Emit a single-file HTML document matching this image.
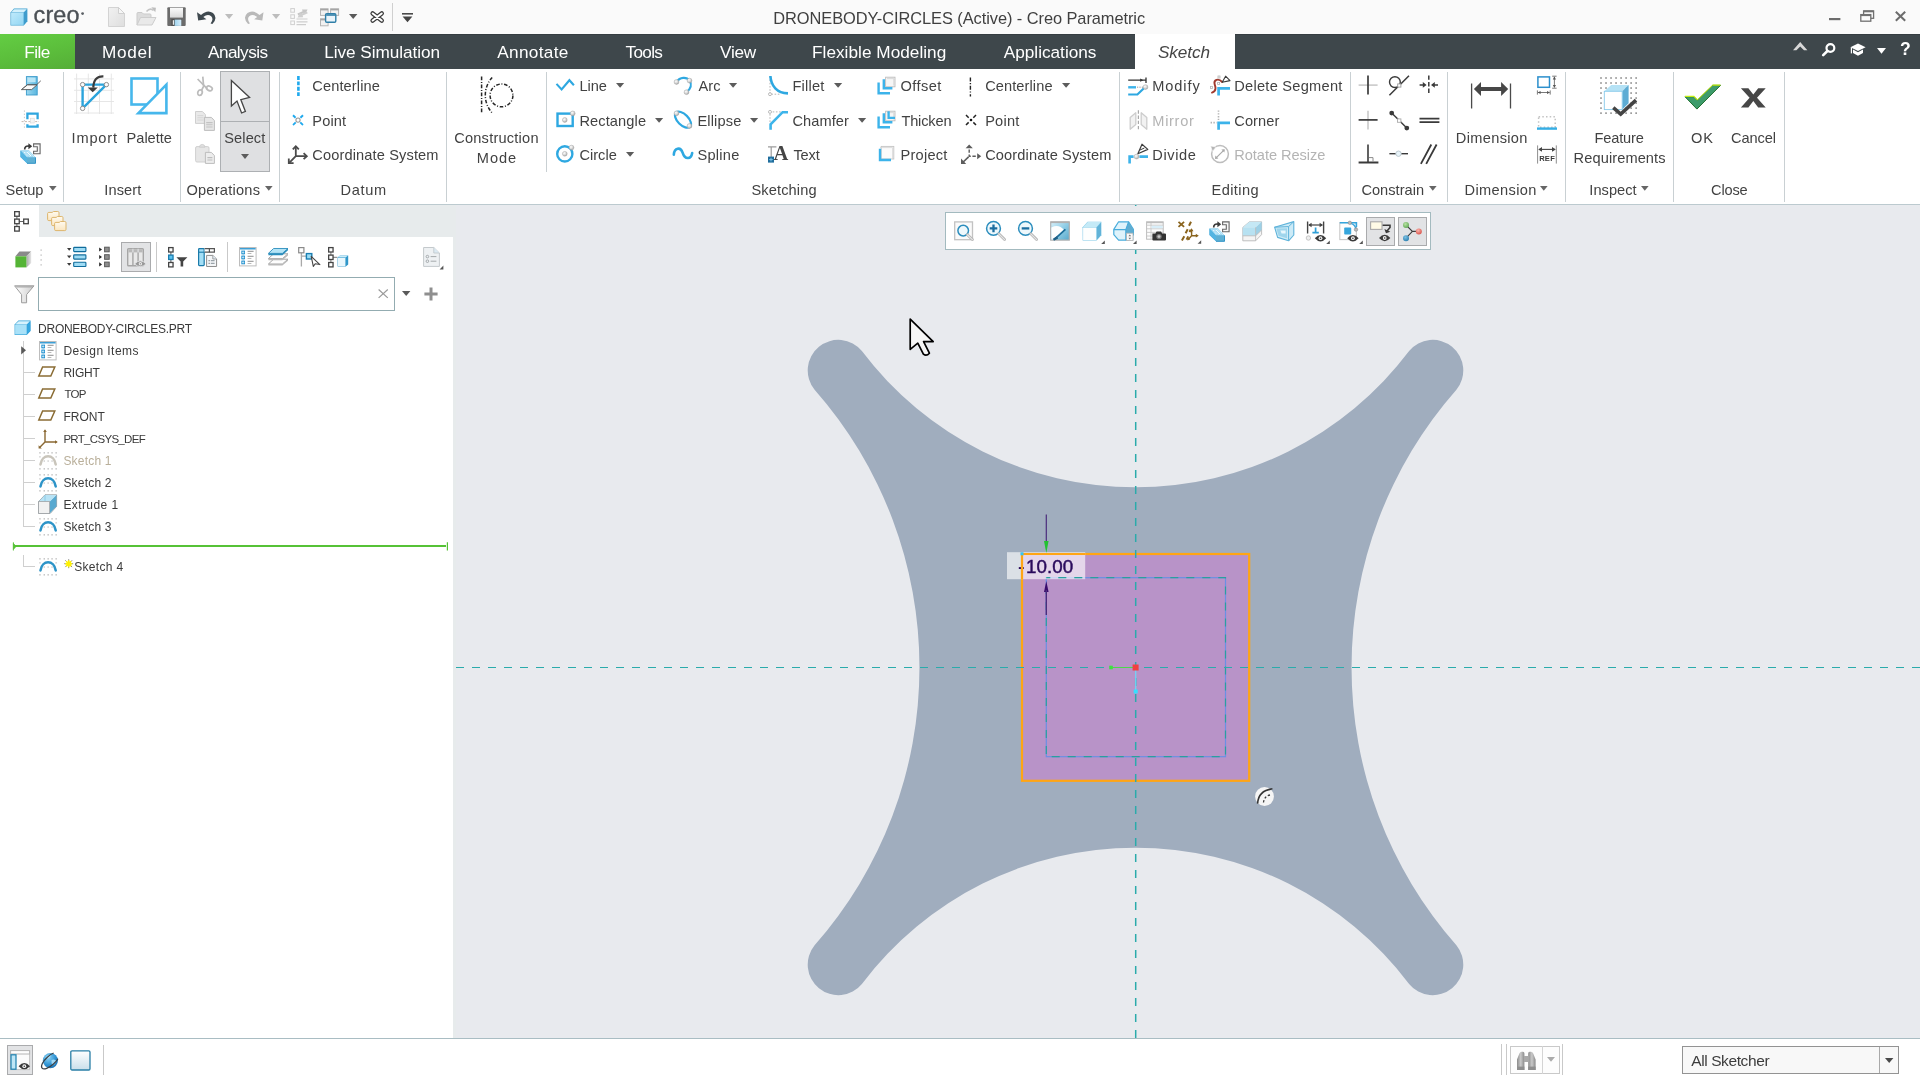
<!DOCTYPE html><html><head><meta charset="utf-8"><title>DRONEBODY-CIRCLES (Active) - Creo Parametric</title><style>
*{box-sizing:border-box}
html,body{margin:0;padding:0}
body{width:1920px;height:1080px;overflow:hidden;position:relative;background:#e8eaee;font-family:"Liberation Sans",sans-serif}
.a{position:absolute}
.t{position:absolute;white-space:pre;line-height:1}
#tx{position:absolute;left:0;top:0;width:1920px;height:1080px;will-change:transform}
svg{position:absolute;overflow:visible}
.sep{position:absolute;width:1px;background:#c9d0d3}
</style></head><body>
<div class="a" style="left:0px;top:0px;width:1920px;height:34px;background:#fafafa;"></div>
<div class="a" style="left:0px;top:34px;width:1920px;height:35px;background:#3e474b;"></div>
<div class="a" style="left:0px;top:34px;width:1920px;height:1px;background:#353d41;"></div>
<div class="a" style="left:0px;top:34px;width:75px;height:35px;background:linear-gradient(168deg,#63cd43 0%,#5cbf3c 50%,#55ae37 100%);"></div>
<div class="a" style="left:1135px;top:34px;width:100px;height:36px;background:#ffffff;"></div>
<div class="a" style="left:0px;top:69px;width:1920px;height:135px;background:#ffffff;"></div>
<div class="a" style="left:1135px;top:69px;width:100px;height:2px;background:#ffffff;"></div>
<div class="a" style="left:0px;top:204px;width:1920px;height:1px;background:#bccacf;"></div>
<div class="a" style="left:0px;top:205px;width:39px;height:33px;background:#ffffff;"></div>
<div class="a" style="left:39px;top:205px;width:414px;height:32px;background:#e7ebec;"></div>
<div class="a" style="left:0px;top:237px;width:453px;height:802px;background:#ffffff;"></div>
<div class="a" style="left:453px;top:205px;width:3px;height:833px;background:#e7ebec;"></div>
<div class="a" style="left:0px;top:1038px;width:1920px;height:1px;background:#a9bdc3;"></div>
<div class="a" style="left:0px;top:1039px;width:1920px;height:41px;background:#ffffff;"></div>
<div class="sep" style="left:63px;top:72px;height:130px"></div>
<div class="sep" style="left:180px;top:72px;height:130px"></div>
<div class="sep" style="left:279px;top:72px;height:130px"></div>
<div class="sep" style="left:446px;top:72px;height:130px"></div>
<div class="sep" style="left:1119px;top:72px;height:130px"></div>
<div class="sep" style="left:1350px;top:72px;height:130px"></div>
<div class="sep" style="left:1447px;top:72px;height:130px"></div>
<div class="sep" style="left:1565px;top:72px;height:130px"></div>
<div class="sep" style="left:1673px;top:72px;height:130px"></div>
<div class="sep" style="left:1784px;top:72px;height:130px"></div>
<div class="sep" style="left:546px;top:72px;height:100px"></div>
<div class="sep" style="left:392px;top:3px;height:28px;background:#d0d0d0"></div>
<svg width="1920" height="1080" style="left:0;top:0" viewBox="0 0 1920 1080">
<path d="M861.9 351.1 A342.8 342.8 0 0 0 1409.1 351.1 A30.5 30.5 0 1 1 1456.4 389.7 A420.4 420.4 0 0 0 1456.4 945.3 A30.5 30.5 0 1 1 1409.1 983.9 A342.8 342.8 0 0 0 861.9 983.9 A30.5 30.5 0 1 1 814.6 945.3 A420.4 420.4 0 0 0 814.6 389.7 A30.5 30.5 0 1 1 861.9 351.1Z" fill="#a0adbe"/>
<rect x="1022" y="554" width="227.2" height="226.8" fill="#b893c8" stroke="#ffa514" stroke-width="2.2"/>
<rect x="1046.3" y="577.7" width="179.2" height="179" fill="none" stroke="#6b8fe4" stroke-width="1.2"/>
<rect x="1046.3" y="577.7" width="179.2" height="179" fill="none" stroke="#2a9f9f" stroke-width="1.2" stroke-dasharray="8 8" stroke-dashoffset="4"/>
<line x1="1135.7" y1="205" x2="1135.7" y2="1038" stroke="#2aabab" stroke-width="1.5" stroke-dasharray="8 8" stroke-dashoffset="7"/>
<line x1="453" y1="667.5" x2="1920" y2="667.5" stroke="#2aabab" stroke-width="1.2" stroke-dasharray="8 8" stroke-dashoffset="13"/>
<rect x="1007" y="552.2" width="78.2" height="27" fill="#ffffff" fill-opacity="0.62"/>
<rect x="1018.8" y="567.1" width="5" height="1.9" fill="#2a0a5c"/>
<path d="M1022 579.2V554H1085.2" fill="none" stroke="#ffa514" stroke-width="2.2"/>
<rect x="1020.5" y="552.3" width="3" height="3" fill="#35c4f2"/>
<path d="M1046.3 577.7H1085.2" fill="none" stroke="#2a9f9f" stroke-width="1.2" stroke-dasharray="8 8" stroke-dashoffset="4"/>
<line x1="1046.3" y1="514.5" x2="1046.3" y2="542" stroke="#4b2c7c" stroke-width="1.2"/>
<path d="M1044 541H1048.6L1046.3 553Z" fill="#22c232"/>
<path d="M1046.3 581L1048.6 592H1044Z" fill="#3a0c6c"/>
<line x1="1046.3" y1="590" x2="1046.3" y2="615" stroke="#4b2c7c" stroke-width="1.4"/>
<line x1="1111" y1="667.5" x2="1133" y2="667.5" stroke="#4cd84c" stroke-width="1"/>
<rect x="1109.2" y="665.7" width="3.6" height="3.6" fill="#3fe03f"/>
<line x1="1135.7" y1="668" x2="1135.7" y2="691" stroke="#6fd8f8" stroke-width="1.2"/>
<rect x="1133.7" y="689.5" width="4" height="4" fill="#35e0ff"/>
<rect x="1132.6" y="664.5" width="6" height="6" fill="#f04040"/>
<circle cx="1264.5" cy="796.5" r="9.4" fill="#f5f5f5"/>
<path d="M1257.6 803.6C1258 795 1263 790 1272.4 788.8" fill="none" stroke="#333" stroke-width="1.6"/>
<path d="M1263.5 802.5C1264 798 1266.5 795.5 1271 794.8" fill="none" stroke="#3a3a3a" stroke-width="1.3" stroke-dasharray="2.2 2"/>
<path d="M910.2 319.2V349.3L917.8 343.2L923.4 354.2Q926.5 356.6 929.4 353.2L923.6 341.6H933.2Z" fill="#f6f6f6" stroke="#000" stroke-width="1.7" stroke-linejoin="round"/>
</svg>
<svg style="left:10px;top:8px" width="18" height="18" viewBox="0 0 18 18">
<defs><linearGradient id="cc1" x1="0" y1="0" x2="1" y2="1"><stop offset="0" stop-color="#bfeafb"/><stop offset="1" stop-color="#93d6f3"/></linearGradient></defs>
<path d="M0.5 4.5L4 0.6H17.4V13.2L13.8 17.4H0.5Z" fill="#3d9fd0"/>
<path d="M1 4.6L4.2 1.2H16.9L13.6 4.6Z" fill="#d4f1fc"/>
<path d="M13.9 4.8L17 1.6V13L13.9 16.6Z" fill="#3f9ccc"/>
<rect x="1.1" y="4.9" width="12.5" height="12" fill="url(#cc1)"/></svg>
<svg style="left:80.6px;top:12.4px" width="3.2" height="3.2" viewBox="0 0 3.2 3.2"><circle cx="1.6" cy="1.6" r="1.4" fill="#5a5f64"/></svg>
<svg style="left:108px;top:7px" width="17" height="20" viewBox="0 0 17 20">
<defs><linearGradient id="nd" x1="0" y1="0" x2="1" y2="1"><stop offset="0" stop-color="#f1f1f1"/><stop offset="1" stop-color="#dedede"/></linearGradient></defs>
<path d="M0.5 0.5H10.5L16.5 6.5V19.5H0.5Z" fill="url(#nd)" stroke="#d3d3d3"/>
<path d="M10.5 0.5V6.5H16.5Z" fill="#f6f6f6" stroke="#d0d0d0" stroke-linejoin="round"/></svg>
<svg style="left:135.5px;top:7px" width="21" height="19" viewBox="0 0 21 19">
<path d="M1 18V6.5Q1 5.5 2 5.5H6L7.5 7H14Q15 7 15 8V10.5" fill="#dcdcdc" stroke="#cbcbcb"/>
<path d="M1 18L4.5 10.5H20L16 18Z" fill="#e9e9e9" stroke="#cdcdcd" stroke-linejoin="round"/>
<path d="M10.5 4.5Q14 0.5 17.5 3.5" fill="none" stroke="#c4c4c4" stroke-width="1.6"/>
<path d="M15 0.4H19.6V5L15 0.4Z" fill="#bdbdbd" transform="rotate(8 17 3)"/></svg>
<svg style="left:167px;top:7.4px" width="19" height="19.2" viewBox="0 0 19 19.2">
<defs><linearGradient id="sv1" x1="0" y1="0" x2="0" y2="1"><stop offset="0" stop-color="#fbfbfb"/><stop offset="1" stop-color="#d9d9d9"/></linearGradient>
<linearGradient id="sv2" x1="0" y1="0" x2="1" y2="0"><stop offset="0" stop-color="#9fd3ee"/><stop offset="1" stop-color="#d7eefb"/></linearGradient></defs>
<rect x="0.3" y="0.3" width="18.4" height="18.6" rx="1" fill="#6b6b6b"/>
<rect x="3" y="0.8" width="13" height="9.8" fill="url(#sv1)"/>
<rect x="4.4" y="12" width="10.6" height="6.9" fill="#4f4f4f"/>
<rect x="7.6" y="12.6" width="6.8" height="6.3" fill="url(#sv2)"/>
<rect x="5.8" y="13.2" width="1.2" height="4.6" fill="#e8e8e8"/></svg>
<svg style="left:197px;top:11.2px" width="19.5" height="13.4" viewBox="0 0 19.5 13.4"><path d="M0 1.2L1.2 9.6L9.4 8.2L6.3 6.1Q10.5 2.6 14.2 5.2Q17 8 13.6 12.4L15.4 13Q21.4 6.8 16 2Q10.4 -2 4 4.1Z" fill="#3f494f"/></svg>
<svg style="left:224.70000000000002px;top:14.100000000000001px" width="8.2" height="5" viewBox="0 0 8.2 5"><path d="M0 0H8.2L4.1 5Z" fill="#bdbdbd"/></svg>
<svg style="left:243.6px;top:11.2px" width="19.5" height="13.4" viewBox="0 0 19.5 13.4"><g transform="translate(19.5,0) scale(-1,1)"><path d="M0 1.2L1.2 9.6L9.4 8.2L6.3 6.1Q10.5 2.6 14.2 5.2Q17 8 13.6 12.4L15.4 13Q21.4 6.8 16 2Q10.4 -2 4 4.1Z" fill="#b9b9b9"/></g></svg>
<svg style="left:271.9px;top:14.100000000000001px" width="8.2" height="5" viewBox="0 0 8.2 5"><path d="M0 0H8.2L4.1 5Z" fill="#bdbdbd"/></svg>
<svg style="left:290px;top:7.2px" width="19" height="19" viewBox="0 0 19 19">
<g fill="none" stroke="#cfcfcf" stroke-width="1"><rect x="0.8" y="1.6" width="3.6" height="3.6"/><rect x="0.8" y="7.8" width="3.6" height="3.6"/><rect x="0.8" y="14" width="3.6" height="3.6"/></g>
<g stroke="#cdcdcd" stroke-width="1.2"><path d="M6.5 12H17.5M6.5 14.8H17.5M6.5 17.6H16"/></g>
<path d="M7.4 6.6L12.6 4.2L12 2.6L17.6 2.4L15 7.4L14 5.8L8.4 8.4Z" fill="#c6c6c6"/>
<path d="M17.8 6.2L12.6 8.6L13.2 10.2L7.6 10.4L10.2 5.4L11.2 7L16.8 4.4Z" fill="#cfcfcf"/></svg>
<svg style="left:320px;top:8.2px" width="19.4" height="18.6" viewBox="0 0 19.4 18.6">
<g fill="#f1f1f1" stroke="#b5b5b5" stroke-width="1"><rect x="0.5" y="0.8" width="7.6" height="6.6"/><rect x="10.6" y="0.8" width="8" height="6.6"/><rect x="0.5" y="10.8" width="7.6" height="7"/></g>
<g fill="#a5a5a5"><rect x="0.5" y="0.8" width="7.6" height="1.6"/><rect x="10.6" y="0.8" width="8" height="1.6"/><rect x="0.5" y="10.8" width="7.6" height="1.6"/></g>
<rect x="5.6" y="5.6" width="10.2" height="8.6" rx="1.2" fill="#eaf4fa" stroke="#2f7fa8" stroke-width="1.4"/>
<rect x="6.2" y="6.2" width="9" height="1.6" fill="#2f7fa8"/></svg>
<svg style="left:348.7px;top:14.100000000000001px" width="8.4" height="5" viewBox="0 0 8.4 5"><path d="M0 0H8.4L4.2 5Z" fill="#595959"/></svg>
<svg style="left:370.3px;top:11.4px" width="14.4" height="12" viewBox="0 0 14.4 12">
<path d="M2.7 2.5L11.7 9.5M11.7 2.5L2.7 9.5" stroke="#3c3c3c" stroke-width="4.6" stroke-linecap="round"/>
<path d="M2.7 2.5L11.7 9.5M11.7 2.5L2.7 9.5" stroke="#ffffff" stroke-width="2.1" stroke-linecap="round"/></svg>
<svg style="left:402px;top:13px" width="11" height="9.4" viewBox="0 0 11 9.4"><rect x="0" y="0" width="11" height="1.6" fill="#4a4a4a"/><path d="M0.6 3.4H10.4L5.5 9.2Z" fill="#444"/></svg>
<svg style="left:1829px;top:17.8px" width="11.4" height="2.4" viewBox="0 0 11.4 2.4"><rect width="11.4" height="2.2" fill="#6c6c6c"/></svg>
<svg style="left:1860px;top:10px" width="14.6" height="12" viewBox="0 0 14.6 12">
<rect x="3.6" y="0.9" width="10" height="7.4" fill="none" stroke="#707070" stroke-width="1.3"/><rect x="3.6" y="0.5" width="10" height="1.8" fill="#707070"/>
<rect x="0.8" y="4.6" width="10" height="6.6" fill="#fafafa" stroke="#707070" stroke-width="1.3"/><rect x="0.8" y="4.2" width="10" height="1.9" fill="#707070"/></svg>
<svg style="left:1895px;top:10.8px" width="11" height="10.6" viewBox="0 0 11 10.6"><path d="M0.8 0.8L10.2 9.8M10.2 0.8L0.8 9.8" stroke="#6c6c6c" stroke-width="2"/></svg>
<svg style="left:1793px;top:42px" width="14.4" height="8.2" viewBox="0 0 14.4 8.2"><path d="M0 8.2L7.2 0L14.4 8.2H11L7.2 4.4L3.4 8.2Z" fill="#d8d8d8"/></svg>
<svg style="left:1821.5px;top:43px" width="13.5" height="13.5" viewBox="0 0 13.5 13.5"><circle cx="8.4" cy="5" r="3.9" fill="none" stroke="#fff" stroke-width="2.2"/><path d="M5.4 8L1.2 12.2" stroke="#fff" stroke-width="2.6" stroke-linecap="round"/></svg>
<svg style="left:1850px;top:43.4px" width="16" height="13.6" viewBox="0 0 16 13.6">
<path d="M8 0.4L15.6 4.2L8 8L0.4 4.2Z" fill="#fff"/>
<path d="M3 6.4V10L8 12.8L13 10V6.4L8 9.2Z" fill="#fff"/>
<path d="M1.4 4.6V10.4" stroke="#fff" stroke-width="1.2"/></svg>
<svg style="left:1876.6px;top:47.6px" width="9" height="5.8" viewBox="0 0 9 5.8"><path d="M0 0H9L4.5 5.8Z" fill="#fff"/></svg>
<span class="t" style="left:1900.2px;top:41.4px;font-size:17.6px;font-weight:bold;color:#fff;will-change:transform">?</span>
<svg style="left:21px;top:75.6px" width="20.4" height="19.6" viewBox="0 0 20.4 19.6">
<defs><linearGradient id="s1" x1="0" y1="0" x2="1" y2="0"><stop offset="0" stop-color="#9bd8f1"/><stop offset="1" stop-color="#5bb6de"/></linearGradient></defs>
<rect x="5.4" y="0.6" width="10.8" height="18.4" fill="url(#s1)" stroke="#3c9bcb" stroke-width="0.9"/>
<rect x="6.6" y="1.6" width="8" height="4.6" fill="#b9e6f7"/>
<path d="M0.4 13.6L6.4 8.8H15.6L19.8 4.8" fill="none" stroke="#555" stroke-width="0.9"/>
<path d="M0.6 13.6L6.4 8.9H16L10.6 13.6Z" fill="#fbfbfb" stroke="#555" stroke-width="0.9" stroke-linejoin="round"/></svg>
<svg style="left:21px;top:110px" width="19" height="19" viewBox="0 0 19 19">
<path d="M3.4 0.4V18.6" stroke="#c9c9c9" stroke-width="1" stroke-dasharray="1.4 1.8"/>
<path d="M0.6 11.6H18" stroke="#c9b9b0" stroke-width="1" stroke-dasharray="2 1.4"/>
<path d="M6.4 9.2V3.6H16.6V9.2M6.4 14.2V16.6H16.6V14.2" fill="none" stroke="#2fa6df" stroke-width="2.3"/>
<rect x="9.6" y="8.2" width="3.6" height="4.8" fill="#f4f4f4" stroke="#d5d5d5" stroke-width="0.6"/></svg>
<svg style="left:20.4px;top:143.4px" width="21" height="21" viewBox="0 0 21 21"><path d="M13.6 0.9H20.1V10.8H13.6V8.2H17.3V3.7H13.6Z" fill="#f6f6f6" stroke="#666" stroke-width="1.1"/>
<path d="M4.7 6.6Q4.6 2.4 9.2 3.1" fill="none" stroke="#3a3a3a" stroke-width="1.7"/><path d="M8.4 0.2L12.2 3.3L8.4 6.2Z" fill="#3a3a3a"/>
<path d="M0.5 7.5H9L15.5 14.5V20.3H7L0.5 14Z" fill="#3aa3d8"/>
<path d="M0.5 7.5H9L15.5 14.5H7Z" fill="#c4eafa"/>
<path d="M2.6 8.6H7.8L12.6 13.6H10.4L6.8 9.8H5.2L8.8 13.6H7.2Z" fill="#f4fcff" stroke="#6cc0e6" stroke-width="0.5"/>
<path d="M0.5 7.5L7 14.5V20.3L0.5 14Z" fill="#55b5e2"/>
<rect x="7" y="14.5" width="8.5" height="5.8" fill="#5fb0d4"/><path d="M7 20.3H15.5V14.5" fill="none" stroke="#2a8fc4" stroke-width="0.9"/></svg>
<svg style="left:49.300000000000004px;top:186.2px" width="7.6" height="4.8" viewBox="0 0 7.6 4.8"><path d="M0 0H7.6L3.8 4.8Z" fill="#666"/></svg>
<svg style="left:74px;top:70px" width="40" height="46" viewBox="0 0 40 46"><path d="M2.6 3.6V44" stroke="#e3e3e3" stroke-width="0.9"/><path d="M14.3 3.6V44" stroke="#e3e3e3" stroke-width="0.9"/><path d="M25.5 3.6V44" stroke="#e3e3e3" stroke-width="0.9"/><path d="M37.3 3.6V44" stroke="#e3e3e3" stroke-width="0.9"/><path d="M0 8.9H40" stroke="#e3e3e3" stroke-width="0.9"/><path d="M0 20.3H40" stroke="#e3e3e3" stroke-width="0.9"/><path d="M0 31.5H40" stroke="#e3e3e3" stroke-width="0.9"/><path d="M0 43H40" stroke="#e3e3e3" stroke-width="0.9"/>
<path d="M8.6 14.6H32.4L8.6 38.4Z" fill="none" stroke="#2ba4dc" stroke-width="2.4" stroke-linejoin="round"/>
<g fill="#fafafa" stroke="#8f8f8f" stroke-width="1"><circle cx="8.6" cy="14.6" r="2.2"/><circle cx="32.4" cy="14.6" r="2.2"/><circle cx="8.6" cy="38.4" r="2.2"/></g>
<path d="M29.4 6.4Q19.6 6 19.3 17.6" fill="none" stroke="#3b3b3b" stroke-width="2.2"/>
<path d="M13.8 17.4H23.8L18.7 22.2Z" fill="#3b3b3b"/></svg>
<svg style="left:129px;top:76px" width="40" height="40" viewBox="0 0 40 40">
<rect x="2.5" y="2.5" width="26" height="26" fill="#fff" stroke="#46b7ec" stroke-width="2.6"/>
<path d="M37.4 8.6V37.1H9.4Z" fill="#fff" stroke="#46b7ec" stroke-width="2.6" stroke-linejoin="miter"/></svg>
<svg style="left:195.6px;top:76px" width="18" height="20" viewBox="0 0 18 20">
<g fill="none" stroke="#bcbcbc" stroke-width="1.7"><path d="M1.6 3L11.4 12.8"/><path d="M6.8 0.6L7.6 10.4L5.2 15"/>
<ellipse cx="4" cy="16.6" rx="2.2" ry="2.8" transform="rotate(20 4 16.6)"/><ellipse cx="13.4" cy="12.4" rx="3" ry="2.2" transform="rotate(25 13.4 12.4)"/></g></svg>
<svg style="left:195px;top:111px" width="20" height="20" viewBox="0 0 20 20">
<path d="M0.5 0.5H7.4L10.4 3.6V12.4H0.5Z" fill="#e9e9e9" stroke="#cfcfcf"/>
<path d="M2.4 4.6H8.4M2.4 6.8H8.4M2.4 9H8.4" stroke="#d4d4d4" stroke-width="0.9"/>
<path d="M9.4 6.4H16.4L19.4 9.6V19.4H9.4Z" fill="#e6e6e6" stroke="#bdbdbd"/>
<path d="M11.2 11.6H17.6M11.2 13.8H17.6M11.2 16H17.6" stroke="#c2c2c2" stroke-width="1.1"/></svg>
<svg style="left:195px;top:144px" width="20" height="20" viewBox="0 0 20 20">
<rect x="0.6" y="2.6" width="13.4" height="15.4" rx="1.4" fill="#e6e6e6" stroke="#d0d0d0"/>
<path d="M4.4 3.2Q4.6 0.4 7.2 0.4Q9.8 0.4 10 3.2Z" fill="#e0e0e0" stroke="#cacaca" stroke-width="0.8"/>
<path d="M10.4 8.4H16.4L19.4 11.6V19.4H10.4Z" fill="#ededed" stroke="#bdbdbd"/>
<path d="M12.4 13.6H17.4M12.4 16H17.4" stroke="#bdbdbd" stroke-width="1.2"/></svg>
<div class="a" style="left:220px;top:71px;width:50px;height:101px;background:#dfe0e2;border:1px solid #adb0b3"></div>
<div class="a" style="left:221px;top:121px;width:48px;height:1px;background:#adb0b3"></div>
<svg style="left:229px;top:78px" width="24" height="38" viewBox="0 0 24 38"><path d="M2.4 2.4V28L8 23L12.6 35L16.4 33.4L11.8 21.6L20.6 19.4Z" fill="#fff" stroke="#464646" stroke-width="1.3" stroke-linejoin="miter"/></svg>
<svg style="left:241.0px;top:153.9px" width="8" height="5" viewBox="0 0 8 5"><path d="M0 0H8L4.0 5Z" fill="#5c5c5c"/></svg>
<svg style="left:265.4px;top:186.2px" width="7.6" height="4.8" viewBox="0 0 7.6 4.8"><path d="M0 0H7.6L3.8 4.8Z" fill="#666"/></svg>
<svg style="left:296.8px;top:76px" width="2.8" height="20" viewBox="0 0 2.8 20"><path d="M1.4 0V20" stroke="#1fa9ee" stroke-width="2.6" stroke-dasharray="3.9 1.5"/></svg>
<svg style="left:292px;top:114px" width="12" height="12" viewBox="0 0 12 12"><path d="M1 1.2L11 11M11 1.2L1 11" stroke="#1fa9ee" stroke-width="1.9" stroke-dasharray="3.6 6.6 3.6 0"/><circle cx="6" cy="6.1" r="2.1" fill="#fff" stroke="#9a9a9a" stroke-width="1.1"/></svg>
<svg style="left:287.6px;top:144.6px" width="20" height="19" viewBox="0 0 20 19"><g fill="none" stroke="#4b4b4b" stroke-width="1.8" stroke-linejoin="miter"><path d="M7.8 1.2V11.2H18.6M7.8 11.2L1.2 17.8"/><path d="M4.8 4.4L7.8 1.2L10.8 4.4M15.6 8.2L18.8 11.2L15.6 14.2M0.8 13.6V18.2H5.6"/></g></svg>
<svg style="left:478px;top:74px" width="40" height="42" viewBox="0 0 40 42">
<g fill="none" stroke="#262626" stroke-width="1.5" stroke-dasharray="3.6 1.7 1 1.7">
<path d="M3.6 2.6V39.8"/>
<path d="M14.2 3.4A26.4 26.4 0 0 0 14.2 39"/>
<circle cx="23.5" cy="21.4" r="11.4"/></g></svg>
<svg width="0" height="0" style="left:0;top:0"><defs><radialGradient id="ballg" cx="0.38" cy="0.35" r="0.75"><stop offset="0" stop-color="#ffffff"/><stop offset="0.55" stop-color="#d2d2d2"/><stop offset="1" stop-color="#8c8c8c"/></radialGradient><linearGradient id="blg" x1="0" y1="0" x2="0" y2="1"><stop offset="0" stop-color="#58c1ee"/><stop offset="1" stop-color="#2a9fd6"/></linearGradient></defs></svg>
<svg style="left:555px;top:78px" width="20" height="14" viewBox="0 0 20 14"><path d="M1.5 5.9L6.6 11.4L14.4 2.2L18.9 7.3" fill="none" stroke="#2ea8e1" stroke-width="2.1"/></svg>
<svg style="left:616.0px;top:83.3px" width="8.2" height="4.8" viewBox="0 0 8.2 4.8"><path d="M0 0H8.2L4.1 4.8Z" fill="#5c5c5c"/></svg>
<svg style="left:555px;top:110px" width="21" height="19" viewBox="0 0 21 19"><rect x="2.5" y="3.6" width="15.2" height="12.4" fill="none" stroke="#2ea8e1" stroke-width="2.4"/><circle cx="17.7" cy="3.4" r="2.4" fill="url(#ballg)" stroke="#a8a8a8" stroke-width="0.5"/><circle cx="9.8" cy="10" r="2.4" fill="url(#ballg)" stroke="#a8a8a8" stroke-width="0.5"/></svg>
<svg style="left:655.1px;top:117.6px" width="8.2" height="4.8" viewBox="0 0 8.2 4.8"><path d="M0 0H8.2L4.1 4.8Z" fill="#5c5c5c"/></svg>
<svg style="left:555px;top:144px" width="21" height="20" viewBox="0 0 21 20"><circle cx="9.8" cy="9.9" r="7.6" fill="none" stroke="#2ea8e1" stroke-width="2.4"/><circle cx="16.5" cy="3.6" r="2.4" fill="url(#ballg)" stroke="#a8a8a8" stroke-width="0.5"/><circle cx="9.8" cy="9.8" r="2.4" fill="url(#ballg)" stroke="#a8a8a8" stroke-width="0.5"/></svg>
<svg style="left:626.0px;top:151.79999999999998px" width="8.2" height="4.8" viewBox="0 0 8.2 4.8"><path d="M0 0H8.2L4.1 4.8Z" fill="#5c5c5c"/></svg>
<svg style="left:672px;top:76px" width="22" height="20" viewBox="0 0 22 20"><path d="M4.5 6C8 0.8 14.6 0.6 17.5 4.6C20.4 8.6 18.6 13 14.5 16.2" fill="none" stroke="#2ea8e1" stroke-width="2.2"/><circle cx="4.5" cy="6" r="2.4" fill="url(#ballg)" stroke="#a8a8a8" stroke-width="0.5"/><circle cx="17.5" cy="4.6" r="2.4" fill="url(#ballg)" stroke="#a8a8a8" stroke-width="0.5"/><circle cx="14.5" cy="16.2" r="2.4" fill="url(#ballg)" stroke="#a8a8a8" stroke-width="0.5"/></svg>
<svg style="left:729.0px;top:83.3px" width="8.2" height="4.8" viewBox="0 0 8.2 4.8"><path d="M0 0H8.2L4.1 4.8Z" fill="#5c5c5c"/></svg>
<svg style="left:672px;top:110px" width="22" height="20" viewBox="0 0 22 20"><ellipse cx="11" cy="9.7" rx="10" ry="5.4" transform="rotate(45 11 9.7)" fill="none" stroke="#2ea8e1" stroke-width="2.2"/><circle cx="4.5" cy="3.3" r="2.4" fill="url(#ballg)" stroke="#a8a8a8" stroke-width="0.5"/><circle cx="17.5" cy="16" r="2.4" fill="url(#ballg)" stroke="#a8a8a8" stroke-width="0.5"/></svg>
<svg style="left:749.9px;top:117.6px" width="8.2" height="4.8" viewBox="0 0 8.2 4.8"><path d="M0 0H8.2L4.1 4.8Z" fill="#5c5c5c"/></svg>
<svg style="left:672px;top:146px" width="22" height="16" viewBox="0 0 22 16"><path d="M1.8 8.6C2.4 2 8.4 0.4 10.6 6.6C12.8 13.6 19 14 20.2 7" fill="none" stroke="#2ea8e1" stroke-width="2.6" stroke-linecap="round"/></svg>
<svg style="left:767px;top:75px" width="22" height="21" viewBox="0 0 22 21"><path d="M3 1.4V19.2H13" fill="none" stroke="#b5b5b5" stroke-width="1" stroke-dasharray="1.6 1.6"/><circle cx="3" cy="19.2" r="1.5" fill="#fff" stroke="#aaa" stroke-width="0.8"/>
<path d="M3.4 1C4 11 10 18 21 18.4" fill="none" stroke="#2ea8e1" stroke-width="2.6"/></svg>
<svg style="left:833.8px;top:83.3px" width="8.2" height="4.8" viewBox="0 0 8.2 4.8"><path d="M0 0H8.2L4.1 4.8Z" fill="#5c5c5c"/></svg>
<svg style="left:767px;top:110px" width="22" height="21" viewBox="0 0 22 21"><path d="M3 12V1.9H14" fill="none" stroke="#b5b5b5" stroke-width="1" stroke-dasharray="1.6 1.6"/><circle cx="3" cy="1.9" r="1.5" fill="#fff" stroke="#aaa" stroke-width="0.8"/>
<path d="M21 2.2H15.6L3.6 14.4V19.8" fill="none" stroke="#3db4ea" stroke-width="2.6"/></svg>
<svg style="left:857.9px;top:117.6px" width="8.2" height="4.8" viewBox="0 0 8.2 4.8"><path d="M0 0H8.2L4.1 4.8Z" fill="#5c5c5c"/></svg>
<svg style="left:767px;top:145px;will-change:transform" width="22" height="19" viewBox="0 0 22 19"><path d="M1 1.9H9.4M4.2 1.9V12" stroke="#9c9c9c" stroke-width="1.2"/>
<text x="6.4" y="15.3" font-family="Liberation Serif,serif" font-weight="bold" font-size="20.5" fill="#454545">A</text>
<rect x="1" y="11.6" width="6" height="6" fill="#1f6d9c"/><path d="M2.2 14.6H5.8M4 12.8V16.4" stroke="#7cc4e8" stroke-width="1"/></svg>
<svg style="left:877px;top:76px" width="20" height="20" viewBox="0 0 20 20"><rect x="8.6" y="1.2" width="9.4" height="9.6" fill="#f6f6f6" stroke="#bdbdbd" stroke-width="0.9"/><path d="M10 2.6H16.8V9.6" fill="none" stroke="#d0d0d0" stroke-width="0.8"/>
<path d="M6.8 3.2V12.2H15.4" fill="none" stroke="#3cb3ea" stroke-width="2.4"/><path d="M1.6 6.4V17.2H13" fill="none" stroke="#3cb3ea" stroke-width="2.4"/></svg>
<svg style="left:877px;top:110px" width="20" height="20" viewBox="0 0 20 20"><rect x="8.6" y="1.2" width="9.4" height="9.6" fill="#f6f6f6" stroke="#bdbdbd" stroke-width="0.9"/><path d="M10 2.6H16.8V9.6" fill="none" stroke="#d0d0d0" stroke-width="0.8"/>
<path d="M6.8 3.2V12.2H15.4" fill="none" stroke="#3cb3ea" stroke-width="2.4"/><path d="M1.6 6.4V17.2H13" fill="none" stroke="#3cb3ea" stroke-width="2.4"/><path d="M11.6 1.2V7.8H18" fill="none" stroke="#3cb3ea" stroke-width="2.3"/></svg>
<svg style="left:877px;top:145px" width="20" height="18" viewBox="0 0 20 18"><rect x="4.2" y="1.4" width="12.6" height="12.6" fill="#fbfbfb" stroke="#c4c4c4" stroke-width="0.9"/><path d="M3 2.6H15.6V14" fill="none" stroke="#d4d4d4" stroke-width="0.8"/>
<path d="M3 3.8V15H14" fill="none" stroke="#3cb3ea" stroke-width="2.4"/></svg>
<svg style="left:969px;top:76.6px" width="3" height="20" viewBox="0 0 3 20"><path d="M1.4 0.4V19.6" stroke="#222" stroke-width="1.4" stroke-dasharray="4 1.6 1.2 1.6"/></svg>
<svg style="left:1062.2px;top:83.3px" width="8.2" height="4.8" viewBox="0 0 8.2 4.8"><path d="M0 0H8.2L4.1 4.8Z" fill="#5c5c5c"/></svg>
<svg style="left:964.8px;top:114px" width="12" height="12" viewBox="0 0 12 12"><path d="M1 1L11 11M11 1L1 11" stroke="#222" stroke-width="1.5" stroke-dasharray="3.8 6.6 3.8 0"/><circle cx="6" cy="6" r="1.3" fill="#111"/></svg>
<svg style="left:960px;top:143.6px" width="22" height="21" viewBox="0 0 22 21"><g fill="#5c5c5c"><path d="M5.6 4.2L9.2 0.4L12.8 4.2Z"/><path d="M17.2 9.2L21.2 12.2L17.2 15.2Z"/><path d="M1 14.6V20H6.2Z"/></g>
<g stroke="#5c5c5c" fill="none"><path d="M9.2 5.4V12.2H16.6" stroke-width="1.4" stroke-dasharray="3.4 1.6"/><path d="M8.6 12.8L3.2 18" stroke-width="1.6"/></g></svg>
<svg style="left:1127px;top:76px" width="22" height="20" viewBox="0 0 22 20"><path d="M1.2 4.2H19.2M19 1.4V7" stroke="#333" stroke-width="1.3" fill="none"/><path d="M13.2 2.6L16.4 4.2L13.2 5.8Z" fill="#333"/>
<path d="M1.2 11.3H9" stroke="#3cb3ea" stroke-width="2.4"/><path d="M10 11.3H16" stroke="#b9b9b9" stroke-width="1.6" stroke-dasharray="1.2 1.2"/>
<path d="M1.2 18.5H10.4L17.2 12" fill="none" stroke="#2ea8e1" stroke-width="2.2"/><circle cx="18.5" cy="11.1" r="2.4" fill="url(#ballg)" stroke="#a8a8a8" stroke-width="0.5"/></svg>
<svg style="left:1129px;top:110px" width="20" height="20" viewBox="0 0 20 20"><path d="M9.4 0.3V19.7" stroke="#a9a9a9" stroke-width="1.2" stroke-dasharray="3.4 1.8"/>
<path d="M1.2 7.6L6.8 2.8V14.6L1.2 19.2Z" fill="#f2f2f2" stroke="#cdcdcd" stroke-width="1.3" stroke-linejoin="round"/>
<path d="M17.8 7.6L12.2 2.8V14.6L17.8 19.2Z" fill="#f2f2f2" stroke="#cdcdcd" stroke-width="1.3" stroke-linejoin="round"/></svg>
<svg style="left:1127px;top:143px" width="22" height="21" viewBox="0 0 22 21"><path d="M2.6 20.5V13.6H6.6M12.4 13.6H21" fill="none" stroke="#3cb3ea" stroke-width="2.6"/>
<path d="M10.9 10.8L15 1.2L20.8 6.4Z" fill="#fff" stroke="#3c3c3c" stroke-width="1.2" stroke-linejoin="round"/><path d="M13 7L17.4 5" stroke="#3c3c3c" stroke-width="1"/><circle cx="9.5" cy="13.6" r="2.4" fill="url(#ballg)" stroke="#a8a8a8" stroke-width="0.5"/></svg>
<svg style="left:1209px;top:75px" width="22" height="21" viewBox="0 0 22 21"><path d="M3 17.6C8 16 6.4 11.4 5.6 9C4.6 5.4 9 2.4 13.2 7" fill="none" stroke="#a03a2e" stroke-width="1.9" stroke-linecap="round"/>
<path d="M13.2 7.2L16.6 1.2L21 5.6Z" fill="#fff" stroke="#3c3c3c" stroke-width="1.1" stroke-linejoin="round"/>
<g fill="none" stroke="#b4b4b4" stroke-width="0.8"><rect x="1.4" y="11.4" width="2" height="2"/><rect x="8.6" y="7.4" width="2" height="2"/><rect x="9" y="1" width="2" height="2"/></g>
<path d="M21 13.4H9.6V20.6" fill="none" stroke="#3cb3ea" stroke-width="2.7"/></svg>
<svg style="left:1209px;top:109px" width="22" height="21" viewBox="0 0 22 21"><path d="M9.5 1.4V11" stroke="#b4b4b4" stroke-width="1.6" stroke-dasharray="1.4 1.4"/><path d="M1.6 13.6H7.6" stroke="#b4b4b4" stroke-width="1.6" stroke-dasharray="1.4 1.4"/>
<path d="M21 13.8H9.6V20.8" fill="none" stroke="#3cb3ea" stroke-width="2.7"/></svg>
<svg style="left:1210px;top:144px" width="20" height="20" viewBox="0 0 20 20"><circle cx="10" cy="10" r="8.4" fill="none" stroke="#bdbdbd" stroke-width="1.5"/>
<path d="M0.6 2L6.2 3L2.4 7.4Z" fill="#b5b5b5" stroke="#fff" stroke-width="0.6"/>
<path d="M5.6 14.4L14.2 5.8" stroke="#a9a9a9" stroke-width="1.2"/><path d="M14.8 5.2L14.4 8.6L11.4 5.6Z" fill="#a9a9a9"/><path d="M5 15L5.4 11.6L8.4 14.6Z" fill="#a9a9a9"/></svg>
<svg style="left:1357.4px;top:74.4px" width="22" height="22" viewBox="0 0 22 22"><path d="M1.6 11.1H20.6" stroke="#c2c2c2" stroke-width="1.4"/><path d="M11 1.6V20.6" stroke="#3a3a3a" stroke-width="1.7"/></svg>
<svg style="left:1387.8px;top:74.4px" width="22" height="22" viewBox="0 0 22 22"><circle cx="6.9" cy="8.1" r="5.4" fill="none" stroke="#3a3a3a" stroke-width="1.4"/><path d="M1.4 21.2L21 1.8" stroke="#3a3a3a" stroke-width="1.5"/><rect x="9.7" y="9.9" width="3.2" height="3.2" fill="#fff" stroke="#999" stroke-width="0.9"/></svg>
<svg style="left:1417.6px;top:74.4px" width="22" height="22" viewBox="0 0 22 22"><path d="M10.8 1.4V20.6" stroke="#3a3a3a" stroke-width="1.5" stroke-dasharray="4.4 2.2"/><path d="M1.6 10.9H6.4M20 10.9H15.2" stroke="#3a3a3a" stroke-width="1.5"/><path d="M4.8 8L8.6 10.9L4.8 13.8ZM16.8 8L13 10.9L16.8 13.8Z" fill="#3a3a3a"/></svg>
<svg style="left:1357.4px;top:108.5px" width="22" height="22" viewBox="0 0 22 22"><path d="M11 1.8V20.4" stroke="#c2c2c2" stroke-width="1.4"/><path d="M1.6 10.9H20.6" stroke="#3a3a3a" stroke-width="1.7"/></svg>
<svg style="left:1387.8px;top:108.5px" width="22" height="22" viewBox="0 0 22 22"><path d="M3.7 4.1L18.8 19.1" stroke="#3a3a3a" stroke-width="1.4"/><circle cx="3.7" cy="4.1" r="2.4" fill="#3a3a3a"/><circle cx="18.8" cy="19.1" r="2.4" fill="#3a3a3a"/><rect x="9.5" y="9.9" width="3.4" height="3.4" fill="#fff" stroke="#aaa" stroke-width="0.9"/></svg>
<svg style="left:1417.6px;top:108.5px" width="22" height="22" viewBox="0 0 22 22"><path d="M1.5 9.6H21.4M1.5 13.2H21.4" stroke="#3a3a3a" stroke-width="1.7"/></svg>
<svg style="left:1357.4px;top:142.6px" width="22" height="22" viewBox="0 0 22 22"><path d="M11 1.4V19.4" stroke="#3a3a3a" stroke-width="1.6"/><path d="M1.6 19.5H21.4" stroke="#3a3a3a" stroke-width="2"/><path d="M12 14.6H16V18.6" fill="none" stroke="#8c8c8c" stroke-width="1"/></svg>
<svg style="left:1387.8px;top:142.6px" width="22" height="22" viewBox="0 0 22 22"><path d="M1.4 10.7H20" stroke="#3a3a3a" stroke-width="1.4"/><circle cx="10.5" cy="10.7" r="2.7" fill="#e8f4fa" stroke="#b8c4ca" stroke-width="0.9"/></svg>
<svg style="left:1417.6px;top:142.6px" width="22" height="22" viewBox="0 0 22 22"><path d="M2.9 20.9L13.3 1.5M8.2 20.9L18.6 1.5" stroke="#3a3a3a" stroke-width="1.8"/></svg>
<svg style="left:1429.2px;top:186.2px" width="7.6" height="4.8" viewBox="0 0 7.6 4.8"><path d="M0 0H7.6L3.8 4.8Z" fill="#666"/></svg>
<svg style="left:1470px;top:81px" width="42" height="29" viewBox="0 0 42 29"><path d="M1.6 2.4V27.4M40.5 2.4V27.4" stroke="#4a4a4a" stroke-width="1.3"/>
<path d="M3.9 8L11 1V6.1H31.1V1L38.2 8L31.1 15V9.9H11V15Z" fill="#474747"/></svg>
<svg style="left:1536px;top:75px" width="22" height="21" viewBox="0 0 22 21"><rect x="1.9" y="1.9" width="11.6" height="10.4" fill="#fff" stroke="#2c8fcc" stroke-width="1.5"/>
<g stroke="#6a6a6a" stroke-width="0.9" fill="none"><path d="M18.4 2V12.4M16.2 1.2H20.6M16.2 13.2H20.6"/><path d="M2 17.5H13.6M1.4 15.4V19.6M14.2 15.4V19.6"/></g>
<g fill="#555"><path d="M18.4 1.6L20 4.4H16.8ZM18.4 12.8L20 10H16.8ZM1.8 17.5L4.6 15.9V19.1ZM13.8 17.5L11 15.9V19.1Z"/></g></svg>
<svg style="left:1536px;top:115px" width="22" height="16" viewBox="0 0 22 16"><rect x="2.6" y="1.8" width="16.6" height="10.4" fill="none" stroke="#c3c3c3" stroke-width="1.5" stroke-dasharray="1.5 2.2"/><path d="M1 13.6H21" stroke="#35aee5" stroke-width="2.4"/></svg>
<svg style="left:1536px;top:145px;will-change:transform" width="22" height="19" viewBox="0 0 22 19"><path d="M1.6 0.4V18.6M20.3 0.4V18.6" stroke="#8e8e8e" stroke-width="1"/><path d="M3 4.4H19" stroke="#444" stroke-width="1.1"/>
<path d="M2.2 4.4L6 2V6.8ZM19.8 4.4L16 2V6.8Z" fill="#444"/>
<text x="3.2" y="16.2" font-family="Liberation Sans,sans-serif" font-weight="bold" font-size="7.6" fill="#3a3a3a" letter-spacing="0.2">REF</text></svg>
<svg style="left:1540.4px;top:186.2px" width="7.6" height="4.8" viewBox="0 0 7.6 4.8"><path d="M0 0H7.6L3.8 4.8Z" fill="#666"/></svg>
<svg style="left:1600px;top:77px" width="37" height="38" viewBox="0 0 37 38"><rect x="0.20" y="0.20" width="1.6" height="1.6" fill="#8d8d8d"/><rect x="0.20" y="5.22" width="1.6" height="1.6" fill="#8d8d8d"/><rect x="0.20" y="10.24" width="1.6" height="1.6" fill="#8d8d8d"/><rect x="0.20" y="15.26" width="1.6" height="1.6" fill="#8d8d8d"/><rect x="0.20" y="20.28" width="1.6" height="1.6" fill="#8d8d8d"/><rect x="0.20" y="25.30" width="1.6" height="1.6" fill="#8d8d8d"/><rect x="0.20" y="30.32" width="1.6" height="1.6" fill="#8d8d8d"/><rect x="0.20" y="35.34" width="1.6" height="1.6" fill="#8d8d8d"/><rect x="5.22" y="0.20" width="1.6" height="1.6" fill="#8d8d8d"/><rect x="5.22" y="5.22" width="1.6" height="1.6" fill="#8d8d8d"/><rect x="5.22" y="10.24" width="1.6" height="1.6" fill="#8d8d8d"/><rect x="5.22" y="15.26" width="1.6" height="1.6" fill="#8d8d8d"/><rect x="5.22" y="20.28" width="1.6" height="1.6" fill="#8d8d8d"/><rect x="5.22" y="25.30" width="1.6" height="1.6" fill="#8d8d8d"/><rect x="5.22" y="30.32" width="1.6" height="1.6" fill="#8d8d8d"/><rect x="5.22" y="35.34" width="1.6" height="1.6" fill="#8d8d8d"/><rect x="10.24" y="0.20" width="1.6" height="1.6" fill="#8d8d8d"/><rect x="10.24" y="5.22" width="1.6" height="1.6" fill="#8d8d8d"/><rect x="10.24" y="10.24" width="1.6" height="1.6" fill="#8d8d8d"/><rect x="10.24" y="15.26" width="1.6" height="1.6" fill="#8d8d8d"/><rect x="10.24" y="20.28" width="1.6" height="1.6" fill="#8d8d8d"/><rect x="10.24" y="25.30" width="1.6" height="1.6" fill="#8d8d8d"/><rect x="10.24" y="30.32" width="1.6" height="1.6" fill="#8d8d8d"/><rect x="10.24" y="35.34" width="1.6" height="1.6" fill="#8d8d8d"/><rect x="15.26" y="0.20" width="1.6" height="1.6" fill="#8d8d8d"/><rect x="15.26" y="5.22" width="1.6" height="1.6" fill="#8d8d8d"/><rect x="15.26" y="10.24" width="1.6" height="1.6" fill="#8d8d8d"/><rect x="15.26" y="15.26" width="1.6" height="1.6" fill="#8d8d8d"/><rect x="15.26" y="20.28" width="1.6" height="1.6" fill="#8d8d8d"/><rect x="15.26" y="25.30" width="1.6" height="1.6" fill="#8d8d8d"/><rect x="15.26" y="30.32" width="1.6" height="1.6" fill="#8d8d8d"/><rect x="15.26" y="35.34" width="1.6" height="1.6" fill="#8d8d8d"/><rect x="20.28" y="0.20" width="1.6" height="1.6" fill="#8d8d8d"/><rect x="20.28" y="5.22" width="1.6" height="1.6" fill="#8d8d8d"/><rect x="20.28" y="10.24" width="1.6" height="1.6" fill="#8d8d8d"/><rect x="20.28" y="15.26" width="1.6" height="1.6" fill="#8d8d8d"/><rect x="20.28" y="20.28" width="1.6" height="1.6" fill="#8d8d8d"/><rect x="20.28" y="25.30" width="1.6" height="1.6" fill="#8d8d8d"/><rect x="20.28" y="30.32" width="1.6" height="1.6" fill="#8d8d8d"/><rect x="20.28" y="35.34" width="1.6" height="1.6" fill="#8d8d8d"/><rect x="25.30" y="0.20" width="1.6" height="1.6" fill="#8d8d8d"/><rect x="25.30" y="5.22" width="1.6" height="1.6" fill="#8d8d8d"/><rect x="25.30" y="10.24" width="1.6" height="1.6" fill="#8d8d8d"/><rect x="25.30" y="15.26" width="1.6" height="1.6" fill="#8d8d8d"/><rect x="25.30" y="20.28" width="1.6" height="1.6" fill="#8d8d8d"/><rect x="25.30" y="25.30" width="1.6" height="1.6" fill="#8d8d8d"/><rect x="25.30" y="30.32" width="1.6" height="1.6" fill="#8d8d8d"/><rect x="25.30" y="35.34" width="1.6" height="1.6" fill="#8d8d8d"/><rect x="30.32" y="0.20" width="1.6" height="1.6" fill="#8d8d8d"/><rect x="30.32" y="5.22" width="1.6" height="1.6" fill="#8d8d8d"/><rect x="30.32" y="10.24" width="1.6" height="1.6" fill="#8d8d8d"/><rect x="30.32" y="15.26" width="1.6" height="1.6" fill="#8d8d8d"/><rect x="30.32" y="20.28" width="1.6" height="1.6" fill="#8d8d8d"/><rect x="30.32" y="25.30" width="1.6" height="1.6" fill="#8d8d8d"/><rect x="30.32" y="30.32" width="1.6" height="1.6" fill="#8d8d8d"/><rect x="30.32" y="35.34" width="1.6" height="1.6" fill="#8d8d8d"/><rect x="35.34" y="0.20" width="1.6" height="1.6" fill="#8d8d8d"/><rect x="35.34" y="5.22" width="1.6" height="1.6" fill="#8d8d8d"/><rect x="35.34" y="10.24" width="1.6" height="1.6" fill="#8d8d8d"/><rect x="35.34" y="15.26" width="1.6" height="1.6" fill="#8d8d8d"/><rect x="35.34" y="20.28" width="1.6" height="1.6" fill="#8d8d8d"/><rect x="35.34" y="25.30" width="1.6" height="1.6" fill="#8d8d8d"/><rect x="35.34" y="30.32" width="1.6" height="1.6" fill="#8d8d8d"/><rect x="35.34" y="35.34" width="1.6" height="1.6" fill="#8d8d8d"/>
<path d="M4.3 14.3L11.2 7.9H28.6L22.2 14.3Z" fill="#b5e2f5"/><path d="M22.2 14.3L28.6 7.9V26.2L22.2 32.6Z" fill="#5dacd4"/>
<rect x="4.3" y="14.3" width="17.9" height="18.3" fill="#fff" stroke="#86c9ea" stroke-width="0.9"/>
<path d="M13.3 30.6L20.7 37L36 23.2" fill="none" stroke="#444" stroke-width="3.6"/></svg>
<svg style="left:1641.3px;top:186.2px" width="7.6" height="4.8" viewBox="0 0 7.6 4.8"><path d="M0 0H7.6L3.8 4.8Z" fill="#666"/></svg>
<svg style="left:1684px;top:84px" width="38" height="27" viewBox="0 0 38 27"><path d="M1 12.7H9.9L13.4 16.2L28.7 1.3H36.6L12.9 25.1Z" fill="#3d9b6b" stroke="#1f6f2f" stroke-width="1" stroke-linejoin="round"/>
<path d="M1 12.4H9.9L13.4 15.9M28.7 1.1H36.4" fill="none" stroke="#c4ee10" stroke-width="1.1"/><path d="M13.4 15.9L28.7 1.1" fill="none" stroke="#c4ee10" stroke-width="1"/></svg>
<svg style="left:1740px;top:88px" width="27" height="20" viewBox="0 0 27 20"><path d="M0.9 0.3H8.4L13.3 6.6L18.2 0.3H25.7L17 9.7L25.7 19.4H18.2L13.3 13L8.4 19.4H0.9L9.6 9.7Z" fill="#474747"/></svg>
<svg style="left:13.5px;top:210.6px" width="15" height="21" viewBox="0 0 15 21"><path d="M2.9 3V18M2.9 10.5H10" stroke="#666" stroke-width="1"/><rect x="0.65" y="0.65" width="4.6" height="4.6" fill="#fff" stroke="#444" stroke-width="1.3"/><rect x="0.65" y="8.1" width="4.6" height="4.6" fill="#fff" stroke="#444" stroke-width="1.3"/><rect x="9.7" y="8.1" width="4.6" height="4.6" fill="#fff" stroke="#444" stroke-width="1.3"/><rect x="0.65" y="15.5" width="4.6" height="4.6" fill="#fff" stroke="#444" stroke-width="1.3"/></svg>
<svg width="0" height="0" style="left:0;top:0"><defs><linearGradient id="folg" x1="0" y1="0" x2="0" y2="1"><stop offset="0" stop-color="#fffaf0"/><stop offset="1" stop-color="#fbe6bf"/></linearGradient></defs></svg>
<svg style="left:47px;top:211px" width="13" height="10" viewBox="0 0 13 10"><path d="M0.6 8.4V2.6Q0.6 1.4 1.8 1.4H5.2L6.4 0.5H10.8Q12 0.5 12 1.7V8.4Q12 9.6 10.8 9.6H1.8Q0.6 9.6 0.6 8.4Z" fill="url(#folg)" stroke="#ddb66e" stroke-width="1"/></svg>
<svg style="left:50.8px;top:216px" width="13" height="10" viewBox="0 0 13 10"><path d="M0.6 8.4V2.6Q0.6 1.4 1.8 1.4H5.2L6.4 0.5H10.8Q12 0.5 12 1.7V8.4Q12 9.6 10.8 9.6H1.8Q0.6 9.6 0.6 8.4Z" fill="url(#folg)" stroke="#ddb66e" stroke-width="1"/></svg>
<svg style="left:54.4px;top:221px" width="13" height="10" viewBox="0 0 13 10"><path d="M0.6 8.4V2.6Q0.6 1.4 1.8 1.4H5.2L6.4 0.5H10.8Q12 0.5 12 1.7V8.4Q12 9.6 10.8 9.6H1.8Q0.6 9.6 0.6 8.4Z" fill="url(#folg)" stroke="#ddb66e" stroke-width="1"/></svg>
<svg style="left:14.6px;top:250.6px" width="17" height="17" viewBox="0 0 17 17"><path d="M0.4 5.3L4.4 0.6H16.2L11.4 5.3Z" fill="#8a8a8a"/>
<defs><linearGradient id="gcr" x1="0" y1="0" x2="1" y2="0"><stop offset="0" stop-color="#a8a8a8"/><stop offset="1" stop-color="#e6e6e6"/></linearGradient></defs>
<path d="M11.4 5.3L16.2 0.6V12L11.4 16.4Z" fill="url(#gcr)"/><rect x="0.4" y="5.3" width="11" height="11.1" fill="#55b436"/></svg>
<svg style="left:40px;top:248.6px" width="2.4" height="18" viewBox="0 0 2.4 18"><rect x="0.3" y="0.2" width="1.7" height="1.7" rx="0.6" fill="#d2d2d2"/><rect x="0.3" y="5.2" width="1.7" height="1.7" rx="0.6" fill="#d2d2d2"/><rect x="0.3" y="10.1" width="1.7" height="1.7" rx="0.6" fill="#d2d2d2"/><rect x="0.3" y="15" width="1.7" height="1.7" rx="0.6" fill="#d2d2d2"/></svg>
<svg style="left:66.8px;top:246.8px" width="20" height="20" viewBox="0 0 20 20"><path d="M0 1H4.4L2.2 3.8Z" fill="#3c3c3c"/><rect x="6.7" y="0.4" width="12.2" height="4.2" rx="0.6" fill="#9fdcf5" stroke="#0f6c9c" stroke-width="1.1"/><path d="M0 8.5H4.4L2.2 11.3Z" fill="#3c3c3c"/><rect x="6.7" y="7.9" width="12.2" height="4.2" rx="0.6" fill="#9fdcf5" stroke="#0f6c9c" stroke-width="1.1"/><path d="M0 15.9H4.4L2.2 18.7Z" fill="#3c3c3c"/><rect x="6.7" y="15.3" width="12.2" height="4.2" rx="0.6" fill="#9fdcf5" stroke="#0f6c9c" stroke-width="1.1"/></svg>
<svg style="left:99.2px;top:246.8px" width="11" height="20" viewBox="0 0 11 20"><path d="M0.2 0.4V4.6L3 2.5Z" fill="#222"/><rect x="5.6" y="0.2" width="4.6" height="4.6" fill="#8e8e8e" stroke="#5a5a5a" stroke-width="1"/><path d="M0.2 7.9V12.1L3 10.0Z" fill="#222"/><rect x="5.6" y="7.7" width="4.6" height="4.6" fill="#8e8e8e" stroke="#5a5a5a" stroke-width="1"/><path d="M0.2 15.3V19.5L3 17.4Z" fill="#222"/><rect x="5.6" y="15.1" width="4.6" height="4.6" fill="#8e8e8e" stroke="#5a5a5a" stroke-width="1"/></svg>
<div class="a" style="left:121px;top:242px;width:30px;height:30px;background:#e2e3e5;border:1.4px solid #aaabad"></div>
<svg style="left:127px;top:248px" width="20" height="19" viewBox="0 0 20 19"><rect x="0.7" y="0.7" width="15.6" height="17" rx="0.8" fill="#e9e9e9" stroke="#a6a6a6" stroke-width="1.4"/>
<path d="M5.9 0.7V17.7M11.1 0.7V17.7" stroke="#a6a6a6" stroke-width="1.4"/><rect x="1.4" y="1.4" width="14.2" height="3" fill="#b9b9b9"/><path d="M5.9 0.7V4.6M11.1 0.7V4.6" stroke="#e2e3e5" stroke-width="1.2"/>
<path d="M7.6 15.9Q13.2 9.8 19.2 15.9Q13.2 21.4 7.6 15.9Z" fill="#989898" stroke="#e2e3e5" stroke-width="0.9"/><circle cx="13.4" cy="15.7" r="1.7" fill="#ececec"/><circle cx="13.4" cy="15.7" r="0.7" fill="#989898"/></svg>
<div class="sep" style="left:156px;top:242px;height:30px;background:#c9c9c9"></div>
<svg style="left:167.6px;top:247px" width="20" height="20" viewBox="0 0 20 20"><path d="M2.9 2.5V17.6" stroke="#555" stroke-width="1"/><rect x="0.65" y="0.6" width="4.4" height="4.4" fill="#fff" stroke="#444" stroke-width="1.3"/><rect x="0.65" y="8.1" width="4.4" height="4.4" fill="#5cc4f0" stroke="#1a7cae" stroke-width="1.3"/><rect x="0.65" y="15.5" width="4.4" height="4.4" fill="#fff" stroke="#444" stroke-width="1.3"/><path d="M8.4 10.2H19.4L15.2 14.6V19.6H12.6V14.6Z" fill="#444"/></svg>
<svg style="left:198px;top:248px" width="19.4" height="19" viewBox="0 0 19.4 19"><rect x="0.6" y="0.6" width="5.6" height="17" rx="0.8" fill="#a4dff6" stroke="#1a7aaa" stroke-width="1.2"/><path d="M0.6 4.2H6.2" stroke="#1a7aaa" stroke-width="1.1"/>
<path d="M6.6 0.6H16.4V4.2H6.6" fill="#fff" stroke="#555" stroke-width="1.2"/><path d="M11.4 0.6V4.2" stroke="#555" stroke-width="1.2"/>
<path d="M8.6 7.4H14.8L18.6 11V18.5H8.6Z" fill="#f4f6f8" stroke="#8e8e8e" stroke-width="1"/><path d="M14.8 7.4V11H18.6" fill="#e2eef6" stroke="#8e8e8e" stroke-width="0.8"/>
<path d="M10.4 12.6H16.6M10.4 15.4H16.6" stroke="#9aa4aa" stroke-width="1.2" stroke-dasharray="1.6 0.8 4 0"/></svg>
<div class="sep" style="left:227px;top:242px;height:30px;background:#c9c9c9"></div>
<svg style="left:239.4px;top:247.3px" width="17.6" height="19.4" viewBox="0 0 17.6 19.4"><rect x="0.5" y="0.5" width="16.6" height="18.4" fill="#fff" stroke="#bdbdbd" stroke-width="1"/><rect x="1" y="1" width="15.600000000000001" height="1.5" fill="#3c9fd6"/><rect x="2.3" y="3.6" width="3.7" height="3.7" fill="#2a94d0"/><path d="M3 5.45H5.3M4.15 4.3V6.6" stroke="#d8f0fb" stroke-width="0.7"/><path d="M8.6 4.3H14.6" stroke="#8d8d8d" stroke-width="1"/><path d="M8.6 6.5H12.4" stroke="#b9b9b9" stroke-width="1"/><rect x="2.3" y="8.6" width="3.7" height="3.7" fill="#2a94d0"/><path d="M3 10.45H5.3M4.15 9.299999999999999V11.6" stroke="#d8f0fb" stroke-width="0.7"/><path d="M8.6 9.299999999999999H14.6" stroke="#8d8d8d" stroke-width="1"/><path d="M8.6 11.5H12.4" stroke="#b9b9b9" stroke-width="1"/><rect x="2.3" y="13.6" width="3.7" height="3.7" fill="#2a94d0"/><path d="M3 15.45H5.3M4.15 14.299999999999999V16.6" stroke="#d8f0fb" stroke-width="0.7"/><path d="M8.6 14.299999999999999H14.6" stroke="#8d8d8d" stroke-width="1"/><path d="M8.6 16.5H12.4" stroke="#b9b9b9" stroke-width="1"/><path d="M4.15 7.3V8.6M4.15 12.3V13.6" stroke="#5fb0dc" stroke-width="0.7"/></svg>
<svg style="left:268px;top:248px" width="20.4" height="18.4" viewBox="0 0 20.4 18.4"><path d="M0.4 16L5.6 11.2H20L14.4 16Z" fill="#fdfdfd" stroke="#9c9c9c" stroke-width="0.9"/><path d="M0.4 16V17.6H14.4L20 12.8V11.2L14.4 16Z" fill="#b9b9b9"/>
<path d="M0.4 10.6L5.6 5.8H20L14.4 10.6Z" fill="#fdfdfd" stroke="#9c9c9c" stroke-width="0.9"/><path d="M0.4 10.6V12.2H14.4L20 7.4V5.8L14.4 10.6Z" fill="#b9b9b9"/>
<path d="M0.4 5.4L5.6 0.5H20L14.4 5.4Z" fill="#b4e4f6" stroke="#2a8dbc" stroke-width="0.9"/><path d="M0.4 5.4V7.2H14.4L20 2.2V0.5L14.4 5.4Z" fill="#2a8dbc"/></svg>
<svg style="left:297.6px;top:247px" width="21" height="20" viewBox="0 0 21 20"><path d="M3.4 5.4V19.6M3.4 9.2H8" stroke="#a9a9a9" stroke-width="1.3"/><rect x="0.7" y="0.6" width="5.2" height="5.2" fill="#fff" stroke="#8a8a8a" stroke-width="1.2"/><rect x="8.4" y="6.6" width="5.4" height="5.4" fill="#9bdcf5" stroke="#1b7fb2" stroke-width="1.4"/><path d="M13.2 9.4V19.6L15.6 17.4L20 19.2Z" fill="#fff" stroke="#444" stroke-width="1.1" stroke-linejoin="round" transform="rotate(-12 13.2 9.4)"/></svg>
<svg style="left:327.6px;top:247px" width="21" height="20" viewBox="0 0 21 20"><path d="M2.9 2.5V17.6M2.9 10.3H9.4" stroke="#777" stroke-width="1"/><rect x="0.65" y="0.6" width="4.4" height="4.4" fill="#fff" stroke="#444" stroke-width="1.3"/><rect x="0.65" y="8.1" width="4.4" height="4.4" fill="#fff" stroke="#444" stroke-width="1.3"/><rect x="0.65" y="15.5" width="4.4" height="4.4" fill="#fff" stroke="#444" stroke-width="1.3"/>
<path d="M9.6 10.6L12 8.4H20.2V17.4L17.8 19.6H9.6Z" fill="#2f96c9"/><path d="M9.8 10.6L12.1 8.6H19.9L17.7 10.6Z" fill="#c9ecfa"/><rect x="10" y="11" width="7.4" height="8.2" fill="#e9f7fd"/></svg>
<svg style="left:423px;top:247px" width="21" height="23" viewBox="0 0 21 23"><path d="M0.6 0.5H10.8L16.4 6V19.4H0.6Z" fill="#eef1f3" stroke="#c4c9cc" stroke-width="1"/><path d="M10.8 0.5V6H16.4" fill="#dbe9f2" stroke="#c2c9cd" stroke-width="0.9"/>
<g fill="none" stroke="#a4a9ac" stroke-width="1"><circle cx="4.4" cy="9.6" r="1.3"/><circle cx="4.4" cy="14.2" r="1.3"/><path d="M7.6 9.6H13.4M7.6 14.2H13.4"/></g><path d="M20.4 18.6V22.4H16.6Z" fill="#555"/></svg>
<svg style="left:14px;top:284.6px" width="21" height="18.6" viewBox="0 0 21 18.6"><defs><linearGradient id="fng" x1="0" y1="0" x2="1" y2="0"><stop offset="0" stop-color="#ffffff"/><stop offset="1" stop-color="#cdcdcd"/></linearGradient></defs>
<path d="M0.6 0.8H20L12.6 9.6V17.8H7.6V9.6Z" fill="url(#fng)" stroke="#9c9c9c" stroke-width="1" stroke-linejoin="round"/><path d="M1.6 1.2H19L18 2.4H2.8Z" fill="#a9a9a9"/></svg>
<div class="a" style="left:38px;top:277px;width:357px;height:34px;background:#fff;border:1px solid #93acb1"></div>
<svg style="left:378px;top:289px" width="10.4" height="9.4" viewBox="0 0 10.4 9.4"><path d="M0.6 0.5L9.8 8.9M9.8 0.5L0.6 8.9" stroke="#9a9a9a" stroke-width="1.2"/></svg>
<svg style="left:401.8px;top:291.1px" width="8.4" height="5" viewBox="0 0 8.4 5"><path d="M0 0H8.4L4.2 5Z" fill="#5a5a5a"/></svg>
<svg style="left:424.4px;top:286.6px" width="14" height="14" viewBox="0 0 14 14"><path d="M7 0.4V13.6M0.4 7H13.6" stroke="#8f8f8f" stroke-width="3"/></svg>
<svg style="left:14px;top:320px" width="17.4" height="16" viewBox="0 0 17.4 16"><path d="M0.6 4.4L4.4 0.6H16.6V11L12.8 15H0.6Z" fill="#2f9fd6"/><path d="M1.2 4.4L4.6 1.2H16L12.8 4.4Z" fill="#d6f2fd"/>
<path d="M13.2 4.6L16.2 1.6V10.8L13.2 14Z" fill="#35a6e0"/><rect x="1.1" y="4.8" width="11.6" height="9.6" fill="#a9e1f8"/></svg>
<div class="a" style="left:23px;top:341px;width:1px;height:186px;background:#cfcfcf"></div>
<div class="a" style="left:23px;top:372px;width:12px;height:1px;background:#cfcfcf"></div>
<div class="a" style="left:23px;top:394px;width:12px;height:1px;background:#cfcfcf"></div>
<div class="a" style="left:23px;top:416px;width:12px;height:1px;background:#cfcfcf"></div>
<div class="a" style="left:23px;top:438px;width:12px;height:1px;background:#cfcfcf"></div>
<div class="a" style="left:23px;top:460px;width:12px;height:1px;background:#cfcfcf"></div>
<div class="a" style="left:23px;top:482px;width:12px;height:1px;background:#cfcfcf"></div>
<div class="a" style="left:23px;top:504px;width:12px;height:1px;background:#cfcfcf"></div>
<div class="a" style="left:23px;top:526px;width:12px;height:1px;background:#cfcfcf"></div>
<svg style="left:20.6px;top:346.4px" width="5.4" height="8.6" viewBox="0 0 5.4 8.6"><path d="M0.2 0.2V8.4L5 4.3Z" fill="#5a5a5a"/></svg>
<svg style="left:39.4px;top:340.6px" width="17.6" height="19.4" viewBox="0 0 17.6 19.4"><rect x="0.5" y="0.5" width="16.6" height="18.4" fill="#fff" stroke="#bdbdbd" stroke-width="1"/><rect x="1" y="1" width="15.600000000000001" height="1.5" fill="#3c9fd6"/><rect x="2.3" y="3.6" width="3.7" height="3.7" fill="#2a94d0"/><path d="M3 5.45H5.3M4.15 4.3V6.6" stroke="#d8f0fb" stroke-width="0.7"/><path d="M8.6 4.3H14.6" stroke="#8d8d8d" stroke-width="1"/><path d="M8.6 6.5H12.4" stroke="#b9b9b9" stroke-width="1"/><rect x="2.3" y="8.6" width="3.7" height="3.7" fill="#2a94d0"/><path d="M3 10.45H5.3M4.15 9.299999999999999V11.6" stroke="#d8f0fb" stroke-width="0.7"/><path d="M8.6 9.299999999999999H14.6" stroke="#8d8d8d" stroke-width="1"/><path d="M8.6 11.5H12.4" stroke="#b9b9b9" stroke-width="1"/><rect x="2.3" y="13.6" width="3.7" height="3.7" fill="#2a94d0"/><path d="M3 15.45H5.3M4.15 14.299999999999999V16.6" stroke="#d8f0fb" stroke-width="0.7"/><path d="M8.6 14.299999999999999H14.6" stroke="#8d8d8d" stroke-width="1"/><path d="M8.6 16.5H12.4" stroke="#b9b9b9" stroke-width="1"/><path d="M4.15 7.3V8.6M4.15 12.3V13.6" stroke="#5fb0dc" stroke-width="0.7"/></svg>
<svg style="left:38.4px;top:366px" width="18" height="11" viewBox="0 0 18 11"><path d="M4.6 1H16.8L12.8 10H0.8Z" fill="none" stroke="#8a6c34" stroke-width="1.5" stroke-linejoin="miter"/></svg>
<svg style="left:38.4px;top:388px" width="18" height="11" viewBox="0 0 18 11"><path d="M4.6 1H16.8L12.8 10H0.8Z" fill="none" stroke="#8a6c34" stroke-width="1.5" stroke-linejoin="miter"/></svg>
<svg style="left:38.4px;top:410px" width="18" height="11" viewBox="0 0 18 11"><path d="M4.6 1H16.8L12.8 10H0.8Z" fill="none" stroke="#8a6c34" stroke-width="1.5" stroke-linejoin="miter"/></svg>
<svg style="left:38px;top:428.6px" width="21" height="21" viewBox="0 0 21 21"><g fill="none" stroke="#8a6832" stroke-width="1.4"><path d="M7 1.6V13H18.6M7 13L1.6 18.4"/></g>
<path d="M7 0.2L8.8 3H5.2ZM19.8 13L17 11.2V14.8ZM0.6 19.6V16.2L3.8 19.4Z" fill="#8a6832"/></svg>
<svg style="left:39px;top:452px" width="18" height="18" viewBox="0 0 18 18"><rect x="0.3" y="0.2" width="1.3" height="1.3" fill="#b4b4b4"/><rect x="0.3" y="16.2" width="1.3" height="1.3" fill="#b4b4b4"/><rect x="4.6" y="0.2" width="1.3" height="1.3" fill="#b4b4b4"/><rect x="4.6" y="16.2" width="1.3" height="1.3" fill="#b4b4b4"/><rect x="8.5" y="0.2" width="1.3" height="1.3" fill="#b4b4b4"/><rect x="8.5" y="16.2" width="1.3" height="1.3" fill="#b4b4b4"/><rect x="12.4" y="0.2" width="1.3" height="1.3" fill="#b4b4b4"/><rect x="12.4" y="16.2" width="1.3" height="1.3" fill="#b4b4b4"/><rect x="16.5" y="0.2" width="1.3" height="1.3" fill="#b4b4b4"/><rect x="16.5" y="16.2" width="1.3" height="1.3" fill="#b4b4b4"/><rect x="4.6" y="8.4" width="1.3" height="1.3" fill="#c4c4c4"/><rect x="8.5" y="8.4" width="1.3" height="1.3" fill="#c4c4c4"/><rect x="12.4" y="8.4" width="1.3" height="1.3" fill="#c4c4c4"/><rect x="0.3" y="4.2" width="1.3" height="1.3" fill="#c4c4c4"/><rect x="16.5" y="4.2" width="1.3" height="1.3" fill="#c4c4c4"/><path d="M1.5 12.4C3 1.6 15.2 1.6 16.7 12.4" fill="none" stroke="#c9c5bb" stroke-width="2.6" stroke-linecap="round"/></svg>
<svg style="left:39px;top:474px" width="18" height="18" viewBox="0 0 18 18"><rect x="0.3" y="0.2" width="1.3" height="1.3" fill="#b4b4b4"/><rect x="0.3" y="16.2" width="1.3" height="1.3" fill="#b4b4b4"/><rect x="4.6" y="0.2" width="1.3" height="1.3" fill="#b4b4b4"/><rect x="4.6" y="16.2" width="1.3" height="1.3" fill="#b4b4b4"/><rect x="8.5" y="0.2" width="1.3" height="1.3" fill="#b4b4b4"/><rect x="8.5" y="16.2" width="1.3" height="1.3" fill="#b4b4b4"/><rect x="12.4" y="0.2" width="1.3" height="1.3" fill="#b4b4b4"/><rect x="12.4" y="16.2" width="1.3" height="1.3" fill="#b4b4b4"/><rect x="16.5" y="0.2" width="1.3" height="1.3" fill="#b4b4b4"/><rect x="16.5" y="16.2" width="1.3" height="1.3" fill="#b4b4b4"/><rect x="4.6" y="8.4" width="1.3" height="1.3" fill="#c4c4c4"/><rect x="8.5" y="8.4" width="1.3" height="1.3" fill="#c4c4c4"/><rect x="12.4" y="8.4" width="1.3" height="1.3" fill="#c4c4c4"/><rect x="0.3" y="4.2" width="1.3" height="1.3" fill="#c4c4c4"/><rect x="16.5" y="4.2" width="1.3" height="1.3" fill="#c4c4c4"/><path d="M1.5 12.4C3 1.6 15.2 1.6 16.7 12.4" fill="none" stroke="#2d94c8" stroke-width="2.6" stroke-linecap="round"/></svg>
<svg style="left:38.4px;top:494.2px" width="19" height="20" viewBox="0 0 19 20"><path d="M0.6 7.6L7 0.8H18.6V12.4L12.2 19.4H0.6Z" fill="#cfeaf6" stroke="#8a8f92" stroke-width="0.8" stroke-linejoin="round"/>
<path d="M11.8 7.6L18.4 1V12.2L11.8 19.2Z" fill="#58a9d0"/><path d="M0.8 7.6L7.1 1H18.4L11.8 7.6Z" fill="#b8e3f5"/><path d="M7 1.2V7.4" stroke="#7cc0e0" stroke-width="0.7"/>
<rect x="0.6" y="7.6" width="11" height="11.8" fill="#f1f1f1" stroke="#9ea2a5" stroke-width="0.8"/></svg>
<svg style="left:39px;top:518px" width="18" height="18" viewBox="0 0 18 18"><rect x="0.3" y="0.2" width="1.3" height="1.3" fill="#b4b4b4"/><rect x="0.3" y="16.2" width="1.3" height="1.3" fill="#b4b4b4"/><rect x="4.6" y="0.2" width="1.3" height="1.3" fill="#b4b4b4"/><rect x="4.6" y="16.2" width="1.3" height="1.3" fill="#b4b4b4"/><rect x="8.5" y="0.2" width="1.3" height="1.3" fill="#b4b4b4"/><rect x="8.5" y="16.2" width="1.3" height="1.3" fill="#b4b4b4"/><rect x="12.4" y="0.2" width="1.3" height="1.3" fill="#b4b4b4"/><rect x="12.4" y="16.2" width="1.3" height="1.3" fill="#b4b4b4"/><rect x="16.5" y="0.2" width="1.3" height="1.3" fill="#b4b4b4"/><rect x="16.5" y="16.2" width="1.3" height="1.3" fill="#b4b4b4"/><rect x="4.6" y="8.4" width="1.3" height="1.3" fill="#c4c4c4"/><rect x="8.5" y="8.4" width="1.3" height="1.3" fill="#c4c4c4"/><rect x="12.4" y="8.4" width="1.3" height="1.3" fill="#c4c4c4"/><rect x="0.3" y="4.2" width="1.3" height="1.3" fill="#c4c4c4"/><rect x="16.5" y="4.2" width="1.3" height="1.3" fill="#c4c4c4"/><path d="M1.5 12.4C3 1.6 15.2 1.6 16.7 12.4" fill="none" stroke="#2d94c8" stroke-width="2.6" stroke-linecap="round"/></svg>
<div class="a" style="left:14px;top:545px;width:432px;height:2px;background:#56c236"></div>
<svg style="left:13px;top:541.6px" width="4" height="9" viewBox="0 0 4 9"><path d="M0.4 0.2V8.6M0.4 1.4L3 4.4L0.4 7.4Z" fill="#56c236" stroke="#56c236" stroke-width="0.8"/></svg>
<svg style="left:443.6px;top:541.6px" width="4" height="9" viewBox="0 0 4 9"><path d="M3.4 0.2V8.6" stroke="#56c236" stroke-width="1.2"/></svg>
<div class="a" style="left:23px;top:555px;width:1px;height:12px;background:#cfcfcf"></div><div class="a" style="left:23px;top:566px;width:12px;height:1px;background:#cfcfcf"></div>
<svg style="left:39px;top:558px" width="18" height="18" viewBox="0 0 18 18"><rect x="0.3" y="0.2" width="1.3" height="1.3" fill="#b4b4b4"/><rect x="0.3" y="16.2" width="1.3" height="1.3" fill="#b4b4b4"/><rect x="4.6" y="0.2" width="1.3" height="1.3" fill="#b4b4b4"/><rect x="4.6" y="16.2" width="1.3" height="1.3" fill="#b4b4b4"/><rect x="8.5" y="0.2" width="1.3" height="1.3" fill="#b4b4b4"/><rect x="8.5" y="16.2" width="1.3" height="1.3" fill="#b4b4b4"/><rect x="12.4" y="0.2" width="1.3" height="1.3" fill="#b4b4b4"/><rect x="12.4" y="16.2" width="1.3" height="1.3" fill="#b4b4b4"/><rect x="16.5" y="0.2" width="1.3" height="1.3" fill="#b4b4b4"/><rect x="16.5" y="16.2" width="1.3" height="1.3" fill="#b4b4b4"/><rect x="4.6" y="8.4" width="1.3" height="1.3" fill="#c4c4c4"/><rect x="8.5" y="8.4" width="1.3" height="1.3" fill="#c4c4c4"/><rect x="12.4" y="8.4" width="1.3" height="1.3" fill="#c4c4c4"/><rect x="0.3" y="4.2" width="1.3" height="1.3" fill="#c4c4c4"/><rect x="16.5" y="4.2" width="1.3" height="1.3" fill="#c4c4c4"/><path d="M1.5 12.4C3 1.6 15.2 1.6 16.7 12.4" fill="none" stroke="#2d94c8" stroke-width="2.6" stroke-linecap="round"/></svg>
<svg style="left:63.6px;top:558.8px" width="9.4" height="9.4" viewBox="0 0 9.4 9.4"><path d="M4.7 0.2V9.2M0.2 4.7H9.2M1.3 1.3L8.1 8.1M8.1 1.3L1.3 8.1" stroke="#8c8c8c" stroke-width="1"/>
<path d="M4.7 1.2V8.2M1.2 4.7H8.2M2.2 2.2L7.2 7.2M7.2 2.2L2.2 7.2" stroke="#fff200" stroke-width="1.5"/><circle cx="4.7" cy="4.7" r="2" fill="#fff200"/></svg>
<div class="a" style="left:945px;top:212px;width:486px;height:38px;background:#fff;border:1px solid #a3babf"></div>
<svg style="left:954px;top:221px" width="20" height="20" viewBox="0 0 20 20"><rect x="0.7" y="0.9" width="17.8" height="17.8" fill="#fafafa" stroke="#c2c2c2" stroke-width="1.3"/><circle cx="9.2" cy="9.6" r="5.3" fill="#eef8fc" stroke="#2b8dbd" stroke-width="1.5"/><path d="M13.4 13.8L18.4 18.6" stroke="#b4b4b4" stroke-width="2.8" stroke-linecap="round"/><path d="M13.4 13.8L18.4 18.6" stroke="#e6e6e6" stroke-width="1.2" stroke-linecap="round"/></svg>
<svg style="left:985px;top:220px" width="22" height="22" viewBox="0 0 22 22"><circle cx="8.5" cy="8.4" r="6.9" fill="#eef8fc" stroke="#2b8dbd" stroke-width="1.5"/><path d="M13.8 13.8L19.6 19.6" stroke="#b4b4b4" stroke-width="2.8" stroke-linecap="round"/><path d="M13.8 13.8L19.6 19.6" stroke="#e6e6e6" stroke-width="1.2" stroke-linecap="round"/><path d="M8.5 4.6V12.2M4.7 8.4H12.3" stroke="#1c6ea0" stroke-width="2.3"/></svg>
<svg style="left:1017px;top:220px" width="22" height="22" viewBox="0 0 22 22"><circle cx="8.5" cy="8.4" r="6.9" fill="#eef8fc" stroke="#2b8dbd" stroke-width="1.5"/><path d="M13.8 13.8L19.6 19.6" stroke="#b4b4b4" stroke-width="2.8" stroke-linecap="round"/><path d="M13.8 13.8L19.6 19.6" stroke="#e6e6e6" stroke-width="1.2" stroke-linecap="round"/><path d="M4.7 8.4H12.3" stroke="#1c6ea0" stroke-width="2.3"/></svg>
<svg style="left:1050px;top:221px" width="20" height="20" viewBox="0 0 20 20"><defs><linearGradient id="rp" x1="0" y1="0" x2="1" y2="1"><stop offset="0" stop-color="#d9f1fa"/><stop offset="0.5" stop-color="#8fcde6"/><stop offset="1" stop-color="#5aa9cb"/></linearGradient></defs>
<rect x="0.7" y="0.9" width="18.6" height="18.2" fill="url(#rp)" stroke="#b0b0b0" stroke-width="1.2"/><rect x="0.7" y="0.5" width="18.6" height="1.6" fill="#b0b0b0"/>
<path d="M1.4 18.4V6.4Q9 2.6 13.8 8.8L5 18.4Z" fill="#fdfefe"/><path d="M4.6 18.2L15.4 8.4" stroke="#1d6e99" stroke-width="1.8"/><path d="M3.4 18.8L7.6 16.4" stroke="#1d5f85" stroke-width="2.4"/></svg>
<svg style="left:1082px;top:220.6px" width="24" height="24" viewBox="0 0 24 24"><path d="M0.6 6.2L5.6 0.7H19.4V14.2L14.6 19.6H0.6Z" fill="#7ec7e6"/><path d="M1 6.2L5.8 1.1H19L14.4 6.2Z" fill="#c5eaf7"/>
<path d="M14.8 6.4L19 1.8V14L14.8 18.8Z" fill="#62b3d8"/><rect x="1.1" y="6.6" width="13.2" height="12.4" fill="#fdfefe"/><path d="M22.8 19.4V23.0H19.2Z" fill="#555"/></svg>
<svg style="left:1113.4px;top:220.6px" width="24" height="24" viewBox="0 0 24 24"><path d="M0.8 8.4L5.6 0.8H15.6L20.4 8.4V13.6L15.6 19.2H5.6L0.8 13.6Z" fill="#dff3fb" stroke="#49acdb" stroke-width="1.2" stroke-linejoin="round"/>
<path d="M15.6 0.8L20.4 8.4V19.2H12.8V8.4Z" fill="#5fadd1"/><path d="M0.8 8.6H12.8L15.6 0.8M12.8 8.6V19.2" fill="none" stroke="#49acdb" stroke-width="1.1"/>
<rect x="13.6" y="12.2" width="6.4" height="7.4" fill="#fbfbfb" stroke="#b5b5b5" stroke-width="0.8"/><path d="M15.4 15.2L16.8 13.6L18.2 15.2ZM15.4 16.8L16.8 18.4L18.2 16.8Z" fill="#777"/><path d="M23.6 19.4V23.0H20Z" fill="#555"/></svg>
<svg style="left:1146px;top:221px" width="21" height="20" viewBox="0 0 21 20"><rect x="0.6" y="0.8" width="16.6" height="17.4" fill="#fdfdfd" stroke="#bdbdbd" stroke-width="1"/><path d="M0.6 4.2H17.2M0.6 7.8H17.2M0.6 11.4H17.2M0.6 15H17.2M5 0.8V18.2" stroke="#c6c6c6" stroke-width="0.9"/>
<rect x="0.6" y="0.8" width="16.6" height="1.4" fill="#bdbdbd"/><rect x="5.6" y="4.8" width="11" height="2.4" fill="#d8eef9"/>
<path d="M6.4 12.4H9.4L10.6 10.4H15L16.2 12.4H19Q20 12.4 20 13.4V18.4Q20 19.4 19 19.4H7.4Q6.4 19.4 6.4 18.4Z" fill="#333"/><circle cx="13" cy="15.6" r="2.7" fill="#777"/><circle cx="13" cy="15.6" r="1.4" fill="#c8c8c8"/></svg>
<svg style="left:1177.6px;top:220.8px" width="25" height="24" viewBox="0 0 25 24"><g stroke="#8a641e" fill="none"><path d="M0.5 0.9L6.1 5.9M6.1 0.9L0.5 5.9" stroke-width="1.8"/>
<path d="M13 0.7L11 4.7M9.7 8.3L7.6 12.3M6.3 15.3L3.9 19.5M12.6 8.6L11.6 11.2M10.2 15.4L8.6 18.6" stroke-width="2"/>
<path d="M13.6 9V14.7H19.2M13.6 14.7L10.6 18" stroke-width="1.4"/></g>
<path d="M13.6 7.2L15.5 10.2H11.7ZM20.8 14.7L17.8 12.8V16.6ZM9.4 19.4V16L12.2 18.6Z" fill="#8a641e"/><path d="M23.200000000000003 19.2V22.8H19.6Z" fill="#555"/></svg>
<svg style="left:1209.4px;top:220.6px" width="21" height="21" viewBox="0 0 21 21"><path d="M13.6 0.9H20.1V10.8H13.6V8.2H17.3V3.7H13.6Z" fill="#f6f6f6" stroke="#666" stroke-width="1.1"/>
<path d="M4.7 6.6Q4.6 2.4 9.2 3.1" fill="none" stroke="#3a3a3a" stroke-width="1.7"/><path d="M8.4 0.2L12.2 3.3L8.4 6.2Z" fill="#3a3a3a"/>
<path d="M0.5 7.5H9L15.5 14.5V20.3H7L0.5 14Z" fill="#3aa3d8"/>
<path d="M0.5 7.5H9L15.5 14.5H7Z" fill="#c4eafa"/>
<path d="M2.6 8.6H7.8L12.6 13.6H10.4L6.8 9.8H5.2L8.8 13.6H7.2Z" fill="#f4fcff" stroke="#6cc0e6" stroke-width="0.5"/>
<path d="M0.5 7.5L7 14.5V20.3L0.5 14Z" fill="#55b5e2"/>
<rect x="7" y="14.5" width="8.5" height="5.8" fill="#5fb0d4"/><path d="M7 20.3H15.5V14.5" fill="none" stroke="#2a8fc4" stroke-width="0.9"/></svg>
<svg style="left:1242px;top:220.6px" width="21" height="21" viewBox="0 0 21 21"><path d="M0.8 6.4L7.4 0.8H19.6V13.6L13.6 19.8H0.8Z" fill="#f4f4f4" stroke="#b9b9b9" stroke-width="0.9" stroke-linejoin="round"/>
<path d="M0.8 6.4L7.4 0.8H19.6L13.6 6.4Z" fill="#c5e8f5"/><path d="M0.8 6.4H13.6V14.8H0.8Z" fill="#b7e1f1"/><path d="M13.6 6.4L19.6 0.8V9L13.6 14.8Z" fill="#9dd0e6"/>
<path d="M13.6 6.4V19.8M0.8 14.8H13.6L19.6 9" fill="none" stroke="#b9b9b9" stroke-width="0.8"/></svg>
<svg style="left:1273.6px;top:220.6px" width="21" height="21" viewBox="0 0 21 21"><path d="M0.6 6.2L19.8 0.6V14L14.6 19.8L3.6 16.4Z" fill="#cdebf7" stroke="#5fb3da" stroke-width="1.1" stroke-linejoin="round"/>
<path d="M0.6 6.2L14.6 5.6L19.8 0.6M14.6 5.6V19.8" fill="none" stroke="#5fb3da" stroke-width="1"/><path d="M2.4 7.6L13 7.2V17.2L4.6 14.8Z" fill="#9fd5ec"/><path d="M6.4 9.4H11.6V12.4H7.6Z" fill="#e8f7fd"/></svg>
<svg style="left:1306px;top:220.6px" width="25" height="24" viewBox="0 0 25 24"><path d="M1.6 0.6V12.4M17.6 0.6V12.4" stroke="#444" stroke-width="1.4"/><path d="M3 4H16.2" stroke="#444" stroke-width="1.2"/><path d="M2.2 4L5.6 1.8V6.2ZM17 4L13.6 1.8V6.2Z" fill="#444"/>
<path d="M9.6 6.6V11.6M6.4 11.6H12.8" stroke="#2e9fd8" stroke-width="1.7"/><circle cx="2.4" cy="17" r="2.2" fill="#eee" stroke="#bbb" stroke-width="0.8"/><path d="M8.8 17.2Q14.5 10.799999999999999 20.200000000000003 17.2Q14.5 23.6 8.8 17.2Z" fill="#3a3a3a"/><circle cx="14.5" cy="17.2" r="1.9" fill="#f2f2f2"/><circle cx="14.5" cy="17.2" r="0.8" fill="#3a3a3a"/><path d="M23.8 19.4V23.0H20.2Z" fill="#555"/></svg>
<svg style="left:1338.6px;top:220.6px" width="25" height="24" viewBox="0 0 25 24"><rect x="0.8" y="1.6" width="16.6" height="17" fill="#fdfdfd" stroke="#c9c9c9" stroke-width="1.1"/><path d="M0.8 1.8H17.4V6" fill="none" stroke="#35a5dc" stroke-width="1.6"/>
<path d="M11 2.4Q16.4 3 16.8 8.6" fill="none" stroke="#35a5dc" stroke-width="1.4"/><rect x="5.2" y="6.6" width="7" height="7" rx="0.8" fill="#35a5dc"/>
<circle cx="10.8" cy="1.8" r="1.7" fill="#bbb" stroke="#8a8a8a" stroke-width="0.6"/><circle cx="17" cy="8.6" r="1.7" fill="#bbb" stroke="#8a8a8a" stroke-width="0.6"/><path d="M8.2 17.2Q13.899999999999999 10.799999999999999 19.6 17.2Q13.899999999999999 23.6 8.2 17.2Z" fill="#3a3a3a"/><circle cx="13.899999999999999" cy="17.2" r="1.9" fill="#f2f2f2"/><circle cx="13.899999999999999" cy="17.2" r="0.8" fill="#3a3a3a"/><path d="M23.8 19.4V23.0H20.2Z" fill="#555"/></svg>
<div class="a" style="left:1366px;top:217px;width:29px;height:29px;background:#e2e3e5;border:1.3px solid #aaabad"></div>
<svg style="left:1369.6px;top:221px" width="22" height="21" viewBox="0 0 22 21"><rect x="0.6" y="0.8" width="11.4" height="7.6" fill="#fffbe6" stroke="#a9a9a9" stroke-width="1.1"/><path d="M12.6 4.2H20V6.4L16.2 11" fill="none" stroke="#3a3a3a" stroke-width="1.6"/><path d="M14.4 8L16 12.2L20.4 10.8Z" fill="#3a3a3a"/><path d="M9 17Q14.7 10.6 20.4 17Q14.7 23.4 9 17Z" fill="#3a3a3a"/><circle cx="14.7" cy="17" r="1.9" fill="#f2f2f2"/><circle cx="14.7" cy="17" r="0.8" fill="#3a3a3a"/></svg>
<div class="a" style="left:1398px;top:217px;width:29px;height:29px;background:#e2e3e5;border:1.3px solid #aaabad"></div>
<svg style="left:1401px;top:221px" width="23" height="21" viewBox="0 0 23 21"><defs><radialGradient id="gb" cx="0.4" cy="0.35" r="0.7"><stop offset="0" stop-color="#b9e3a3"/><stop offset="1" stop-color="#5ea552"/></radialGradient>
<radialGradient id="rb" cx="0.4" cy="0.35" r="0.7"><stop offset="0" stop-color="#fbb4ac"/><stop offset="1" stop-color="#d9534a"/></radialGradient>
<radialGradient id="bb" cx="0.4" cy="0.35" r="0.7"><stop offset="0" stop-color="#7cc0e2"/><stop offset="1" stop-color="#2a7fb0"/></radialGradient></defs>
<path d="M5 4L11.4 10.4H17.8M11.4 10.4L5 17.2" fill="none" stroke="#3c3c3c" stroke-width="1.1"/>
<circle cx="5" cy="4" r="3" fill="url(#gb)"/><circle cx="17.8" cy="10.4" r="3" fill="url(#rb)"/><circle cx="5" cy="17.2" r="3" fill="url(#bb)"/></svg>
<div class="a" style="left:7px;top:1045px;width:26px;height:30px;background:#e2e3e5;border:1.3px solid #aaabad"></div>
<svg style="left:10px;top:1050px" width="21" height="21" viewBox="0 0 21 21"><rect x="0.6" y="0.6" width="19" height="19" fill="#fbfbfb" stroke="#c4c4c4" stroke-width="1"/><rect x="0.6" y="0.6" width="19" height="3.4" fill="#fdfdfd" stroke="#b4b4b4" stroke-width="1"/>
<rect x="1" y="4.8" width="5" height="14.4" fill="#bfe6f6" stroke="#1d7fae" stroke-width="1.2"/><path d="M8.6 16.2Q14.3 10.0 20.0 16.2Q14.3 22.4 8.6 16.2Z" fill="#3a3a3a"/><circle cx="14.3" cy="16.2" r="1.9" fill="#f2f2f2"/><circle cx="14.3" cy="16.2" r="0.8" fill="#3a3a3a"/></svg>
<svg style="left:39.6px;top:1049.6px" width="21" height="21" viewBox="0 0 21 21"><defs><radialGradient id="glb" cx="0.35" cy="0.3" r="0.8"><stop offset="0" stop-color="#8fd4f5"/><stop offset="0.6" stop-color="#2f93d3"/><stop offset="1" stop-color="#1b6fb0"/></radialGradient></defs>
<circle cx="10.4" cy="10.6" r="7.6" fill="url(#glb)"/><path d="M5.6 7.4Q8 4.6 11 5.4Q10 8 7.6 8.6ZM11.6 10Q14.6 8.6 16.4 11Q15 15 12.4 15.6Q11 12.6 11.6 10Z" fill="#b9e6fa" opacity="0.8"/>
<ellipse cx="10.4" cy="10.6" rx="11.2" ry="4.6" transform="rotate(-42 10.4 10.6)" fill="none" stroke="#3a3f44" stroke-width="1.2" stroke-dasharray="40 13" stroke-dashoffset="-6"/></svg>
<svg style="left:69.6px;top:1049.6px" width="21" height="21" viewBox="0 0 21 21"><defs><linearGradient id="sqg" x1="0" y1="0" x2="0" y2="1"><stop offset="0" stop-color="#ffffff"/><stop offset="1" stop-color="#c9dfea"/></linearGradient></defs>
<rect x="0.8" y="0.8" width="19.2" height="19.2" rx="1.2" fill="url(#sqg)" stroke="#2a7fa6" stroke-width="1.3"/></svg>
<div class="sep" style="left:103px;top:1045px;height:30px;background:#c9c9c9"></div>
<div class="sep" style="left:1501px;top:1044px;height:31px;background:#c9c9c9"></div>
<div class="sep" style="left:1506px;top:1044px;height:31px;background:#c9c9c9"></div>
<div class="sep" style="left:1562px;top:1044px;height:31px;background:#c9c9c9"></div>
<div class="a" style="left:1509.6px;top:1045.6px;width:50.4px;height:28.6px;background:#fdfdfd;border:1px solid #c9c9c9"></div>
<div class="a" style="left:1542px;top:1046px;width:1px;height:28px;background:#d4d4d4"></div>
<svg style="left:1515.6px;top:1050.6px" width="21" height="20" viewBox="0 0 21 20"><defs><linearGradient id="bng" x1="0" y1="0" x2="1" y2="0"><stop offset="0" stop-color="#8a8a8a"/><stop offset="0.5" stop-color="#c9c9c9"/><stop offset="1" stop-color="#8a8a8a"/></linearGradient></defs>
<path d="M1 19V8.6L3.4 2.4Q4 0.8 5.6 0.8H7Q8.4 0.8 8.4 2.4V19Z" fill="url(#bng)"/><path d="M19.6 19V8.6L17.2 2.4Q16.6 0.8 15 0.8H13.6Q12.2 0.8 12.2 2.4V19Z" fill="url(#bng)"/><rect x="8" y="5" width="4.6" height="6" fill="#a9a9a9"/><rect x="1" y="15.6" width="7.4" height="3.4" fill="#8e8e8e"/><rect x="12.2" y="15.6" width="7.4" height="3.4" fill="#8e8e8e"/></svg>
<svg style="left:1547.0px;top:1057.1999999999998px" width="8" height="4.8" viewBox="0 0 8 4.8"><path d="M0 0H8L4.0 4.8Z" fill="#ababab"/></svg>
<div class="a" style="left:1682px;top:1046px;width:217px;height:28px;background:#f8f8f8;border:1px solid #939393"></div>
<div class="a" style="left:1879px;top:1047px;width:1px;height:26px;background:#a9a9a9"></div>
<svg style="left:1884.8px;top:1057.9px" width="8.4" height="5" viewBox="0 0 8.4 5"><path d="M0 0H8.4L4.2 5Z" fill="#4a4a4a"/></svg>
<div id="tx">
<span class="t" style="left:773.3px;top:9.66px;font-size:16.4px;letter-spacing:-0.065px;color:#404040;">DRONEBODY-CIRCLES (Active) - Creo Parametric</span>
<span class="t" style="left:33.6px;top:4.21px;font-size:23.4px;letter-spacing:0.133px;color:#4b5055;-webkit-text-stroke:0.35px #4b5055">creo</span>
<span class="t" style="left:24.3px;top:43.98px;font-size:17.2px;letter-spacing:-0.533px;color:#ffffff;">File</span>
<span class="t" style="left:102px;top:43.98px;font-size:17.2px;letter-spacing:0.675px;color:#ffffff;">Model</span>
<span class="t" style="left:208px;top:43.98px;font-size:17.2px;letter-spacing:-0.571px;color:#ffffff;">Analysis</span>
<span class="t" style="left:324.3px;top:43.98px;font-size:17.2px;letter-spacing:-0.064px;color:#ffffff;">Live Simulation</span>
<span class="t" style="left:497.3px;top:43.98px;font-size:17.2px;letter-spacing:0.329px;color:#ffffff;">Annotate</span>
<span class="t" style="left:625.6px;top:43.98px;font-size:17.2px;letter-spacing:-0.725px;color:#ffffff;">Tools</span>
<span class="t" style="left:720px;top:43.98px;font-size:17.2px;letter-spacing:-0.267px;color:#ffffff;">View</span>
<span class="t" style="left:812px;top:43.98px;font-size:17.2px;letter-spacing:0.031px;color:#ffffff;">Flexible Modeling</span>
<span class="t" style="left:1003.75px;top:43.98px;font-size:17.2px;letter-spacing:0.0px;color:#ffffff;">Applications</span>
<span class="t" style="left:1158px;top:43.98px;font-size:17.2px;letter-spacing:-0.1px;color:#454545;font-style:italic">Sketch</span>
<span class="t" style="left:5.6px;top:182.79px;font-size:14.6px;letter-spacing:-0.075px;color:#424242;">Setup</span>
<span class="t" style="left:104.3px;top:182.79px;font-size:14.6px;letter-spacing:0.08px;color:#424242;">Insert</span>
<span class="t" style="left:71.5px;top:130.89px;font-size:14.6px;letter-spacing:0.84px;color:#424242;">Import</span>
<span class="t" style="left:126.6px;top:130.89px;font-size:14.6px;letter-spacing:-0.033px;color:#424242;">Palette</span>
<span class="t" style="left:224.3px;top:130.89px;font-size:14.6px;letter-spacing:0.08px;color:#424242;">Select</span>
<span class="t" style="left:186.4px;top:182.79px;font-size:14.6px;letter-spacing:0.244px;color:#424242;">Operations</span>
<span class="t" style="left:312.3px;top:79.49px;font-size:14.6px;letter-spacing:0.122px;color:#424242;">Centerline</span>
<span class="t" style="left:312.3px;top:113.79px;font-size:14.6px;letter-spacing:0.125px;color:#424242;">Point</span>
<span class="t" style="left:312.3px;top:148.09px;font-size:14.6px;letter-spacing:0.131px;color:#424242;">Coordinate System</span>
<span class="t" style="left:340.5px;top:182.79px;font-size:14.6px;letter-spacing:0.675px;color:#424242;">Datum</span>
<span class="t" style="left:454.2px;top:130.89px;font-size:14.6px;letter-spacing:0.218px;color:#424242;">Construction</span>
<span class="t" style="left:476.8px;top:150.69px;font-size:14.6px;letter-spacing:0.967px;color:#424242;">Mode</span>
<span class="t" style="left:579.4px;top:79.49px;font-size:14.6px;letter-spacing:-0.033px;color:#424242;">Line</span>
<span class="t" style="left:579.4px;top:113.79px;font-size:14.6px;letter-spacing:0.112px;color:#424242;">Rectangle</span>
<span class="t" style="left:579.4px;top:148.09px;font-size:14.6px;letter-spacing:0.02px;color:#424242;">Circle</span>
<span class="t" style="left:698.4px;top:79.49px;font-size:14.6px;letter-spacing:0.15px;color:#424242;">Arc</span>
<span class="t" style="left:697.4px;top:113.79px;font-size:14.6px;letter-spacing:0.167px;color:#424242;">Ellipse</span>
<span class="t" style="left:697.4px;top:148.09px;font-size:14.6px;letter-spacing:0.26px;color:#424242;">Spline</span>
<span class="t" style="left:792.4px;top:79.49px;font-size:14.6px;letter-spacing:0.22px;color:#424242;">Fillet</span>
<span class="t" style="left:792.4px;top:113.79px;font-size:14.6px;letter-spacing:0.083px;color:#424242;">Chamfer</span>
<span class="t" style="left:793.4px;top:148.09px;font-size:14.6px;letter-spacing:-0.1px;color:#424242;">Text</span>
<span class="t" style="left:900.4px;top:79.49px;font-size:14.6px;letter-spacing:0.46px;color:#424242;">Offset</span>
<span class="t" style="left:901.4px;top:113.79px;font-size:14.6px;letter-spacing:-0.15px;color:#424242;">Thicken</span>
<span class="t" style="left:900.4px;top:148.09px;font-size:14.6px;letter-spacing:0.267px;color:#424242;">Project</span>
<span class="t" style="left:985.2px;top:79.49px;font-size:14.6px;letter-spacing:0.089px;color:#424242;">Centerline</span>
<span class="t" style="left:985.2px;top:113.79px;font-size:14.6px;letter-spacing:0.2px;color:#424242;">Point</span>
<span class="t" style="left:985.2px;top:148.09px;font-size:14.6px;letter-spacing:0.131px;color:#424242;">Coordinate System</span>
<span class="t" style="left:751.4px;top:182.79px;font-size:14.6px;letter-spacing:0.138px;color:#424242;">Sketching</span>
<span class="t" style="left:1152.3px;top:79.49px;font-size:14.6px;letter-spacing:0.88px;color:#424242;">Modify</span>
<span class="t" style="left:1152.3px;top:113.79px;font-size:14.6px;letter-spacing:0.68px;color:#b4b4b4;">Mirror</span>
<span class="t" style="left:1152.3px;top:148.09px;font-size:14.6px;letter-spacing:0.6px;color:#424242;">Divide</span>
<span class="t" style="left:1234.3px;top:79.49px;font-size:14.6px;letter-spacing:0.262px;color:#424242;">Delete Segment</span>
<span class="t" style="left:1234.3px;top:113.79px;font-size:14.6px;letter-spacing:0.08px;color:#424242;">Corner</span>
<span class="t" style="left:1234.3px;top:148.09px;font-size:14.6px;letter-spacing:-0.05px;color:#b4b4b4;">Rotate Resize</span>
<span class="t" style="left:1211.5px;top:182.79px;font-size:14.6px;letter-spacing:0.417px;color:#424242;">Editing</span>
<span class="t" style="left:1361.4px;top:182.79px;font-size:14.6px;letter-spacing:0.025px;color:#424242;">Constrain</span>
<span class="t" style="left:1455.8px;top:130.89px;font-size:14.6px;letter-spacing:0.338px;color:#424242;">Dimension</span>
<span class="t" style="left:1464.6px;top:182.79px;font-size:14.6px;letter-spacing:0.363px;color:#424242;">Dimension</span>
<span class="t" style="left:1594.4px;top:130.89px;font-size:14.6px;letter-spacing:-0.133px;color:#424242;">Feature</span>
<span class="t" style="left:1573.6px;top:150.69px;font-size:14.6px;letter-spacing:0.1px;color:#424242;">Requirements</span>
<span class="t" style="left:1589.3px;top:182.79px;font-size:14.6px;letter-spacing:0.05px;color:#424242;">Inspect</span>
<span class="t" style="left:1691px;top:130.89px;font-size:14.6px;letter-spacing:1.0px;color:#424242;">OK</span>
<span class="t" style="left:1731px;top:130.89px;font-size:14.6px;letter-spacing:-0.1px;color:#424242;">Cancel</span>
<span class="t" style="left:1711px;top:182.79px;font-size:14.6px;letter-spacing:-0.15px;color:#424242;">Close</span>
<span class="t" style="left:38.1px;top:322.9px;font-size:12px;letter-spacing:-0.275px;color:#3a3a3a;">DRONEBODY-CIRCLES.PRT</span>
<span class="t" style="left:63.4px;top:344.9px;font-size:12px;letter-spacing:0.464px;color:#3a3a3a;">Design Items</span>
<span class="t" style="left:63.4px;top:367.2px;font-size:12px;letter-spacing:-0.2px;color:#3a3a3a;">RIGHT</span>
<span class="t" style="left:64.4px;top:389.43px;font-size:11.5px;letter-spacing:-0.7px;color:#3a3a3a;">TOP</span>
<span class="t" style="left:63.4px;top:411.1px;font-size:12px;letter-spacing:0.0px;color:#3a3a3a;">FRONT</span>
<span class="t" style="left:63.4px;top:433.53px;font-size:11.5px;letter-spacing:-0.691px;color:#3a3a3a;">PRT_CSYS_DEF</span>
<span class="t" style="left:63.4px;top:455.1px;font-size:12px;letter-spacing:0.2px;color:#b9af9a;">Sketch 1</span>
<span class="t" style="left:63.4px;top:477.1px;font-size:12px;letter-spacing:0.2px;color:#3a3a3a;">Sketch 2</span>
<span class="t" style="left:63.4px;top:499.2px;font-size:12px;letter-spacing:0.412px;color:#3a3a3a;">Extrude 1</span>
<span class="t" style="left:63.4px;top:521.0px;font-size:12px;letter-spacing:0.2px;color:#3a3a3a;">Sketch 3</span>
<span class="t" style="left:74.2px;top:560.9px;font-size:12px;letter-spacing:0.329px;color:#3a3a3a;">Sketch 4</span>
<span class="t" style="left:1691.2px;top:1053.02px;font-size:15.5px;letter-spacing:-0.391px;color:#3c3c3c;">All Sketcher</span>
<span class="t" style="left:1025.9px;top:557.72px;font-size:18.8px;letter-spacing:0.075px;color:#2a0a5c;-webkit-text-stroke:0.45px #2a0a5c">10.00</span>
</div>
</body></html>
